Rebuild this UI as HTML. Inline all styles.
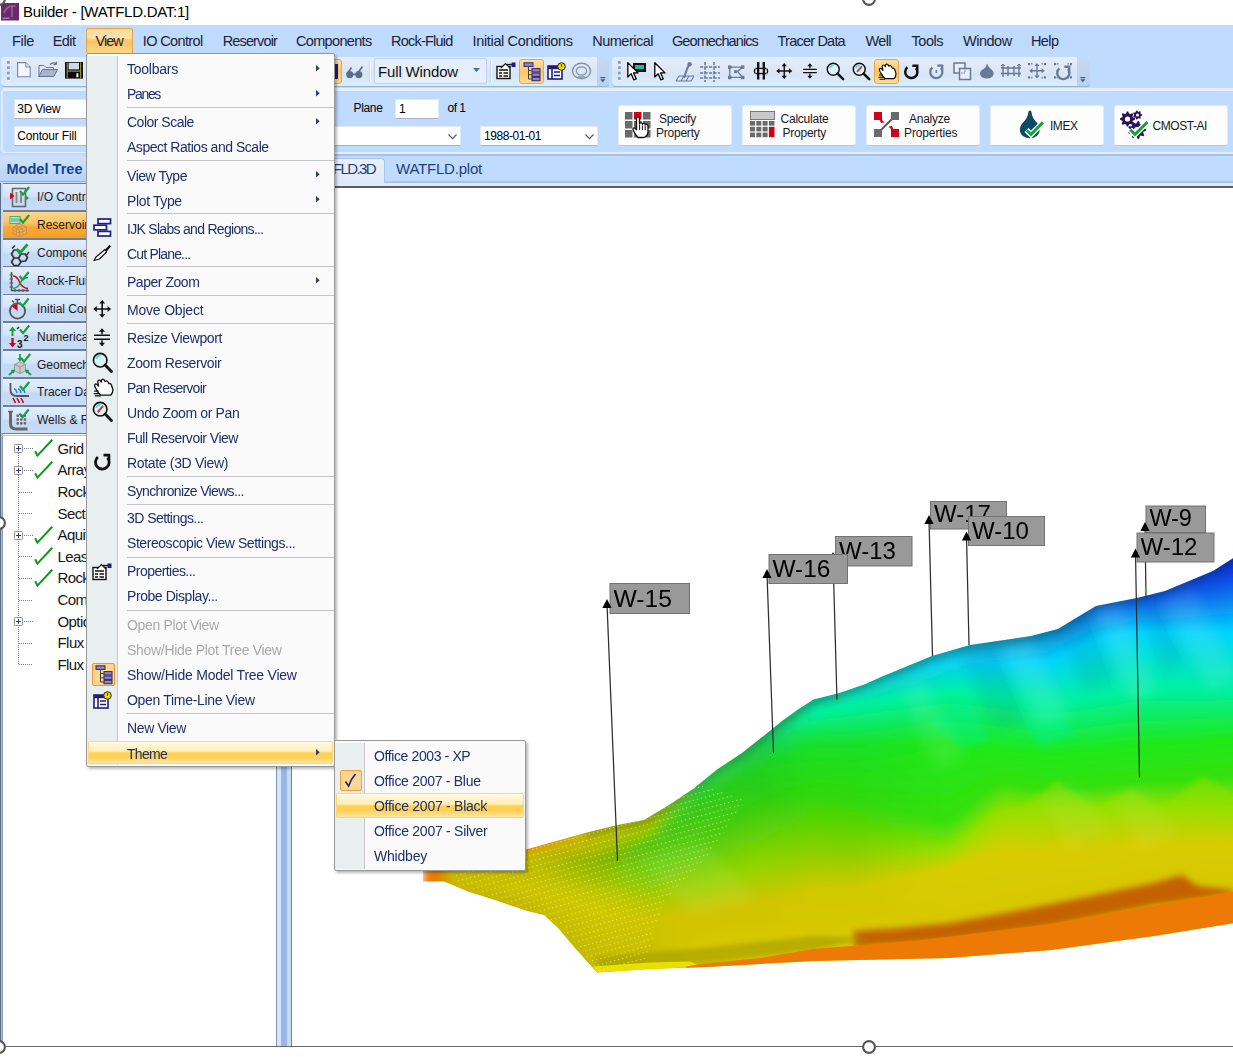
<!DOCTYPE html>
<html><head><meta charset="utf-8"><title>Builder</title>
<style>
html,body{margin:0;padding:0;}
body{width:1233px;height:1057px;position:relative;overflow:hidden;background:#fff;font-family:"Liberation Sans",sans-serif;}
.t{position:absolute;white-space:pre;line-height:20px;height:20px;font-family:"Liberation Sans",sans-serif;}
svg{overflow:visible}
</style></head><body>
<div style="position:absolute;left:0px;top:0px;width:1233px;height:25px;background:#fff;"></div>
<svg style="position:absolute;left:0.8px;top:3px;" width="18" height="17.5" viewBox="0 0 18 17.5"><rect x="0" y="0" width="18" height="17.5" fill="#6a2a6c"/><path d="M3 10 Q5.5 3.5 11 3.2 L14.5 3.2 M11 3.5 V14" fill="none" stroke="#8f5f93" stroke-width="1.8"/><rect x="1.5" y="14.6" width="7" height="1.2" fill="#b58fb8"/></svg>
<span class="t" style="left:23px;top:2.40px;font-size:15px;color:#000;font-weight:400;letter-spacing:-0.261px;">Builder - [WATFLD.DAT:1]</span>
<div style="position:absolute;left:0px;top:25px;width:1233px;height:162px;background:#bfdbff;"></div>
<div style="position:absolute;left:86px;top:28px;width:47px;height:25px;box-sizing:border-box;border:1px solid #e8a343;border-bottom:none;border-radius:3px 3px 0 0;background:linear-gradient(#fbd99a 0%,#fde3ae 35%,#fbc361 50%,#fcd689 100%);"></div>
<span class="t" style="left:12px;top:31.42px;font-size:14.5px;color:#1b2238;font-weight:400;letter-spacing:-0.344px;">File</span>
<span class="t" style="left:52.8px;top:31.42px;font-size:14.5px;color:#1b2238;font-weight:400;letter-spacing:-0.600px;">Edit</span>
<span class="t" style="left:95.5px;top:31.42px;font-size:14.5px;color:#1b2238;font-weight:400;letter-spacing:-0.993px;">View</span>
<span class="t" style="left:142.8px;top:31.42px;font-size:14.5px;color:#1b2238;font-weight:400;letter-spacing:-0.629px;">IO Control</span>
<span class="t" style="left:222.7px;top:31.42px;font-size:14.5px;color:#1b2238;font-weight:400;letter-spacing:-0.861px;">Reservoir</span>
<span class="t" style="left:296px;top:31.42px;font-size:14.5px;color:#1b2238;font-weight:400;letter-spacing:-0.672px;">Components</span>
<span class="t" style="left:391px;top:31.42px;font-size:14.5px;color:#1b2238;font-weight:400;letter-spacing:-0.780px;">Rock-Fluid</span>
<span class="t" style="left:472.6px;top:31.42px;font-size:14.5px;color:#1b2238;font-weight:400;letter-spacing:-0.356px;">Initial Conditions</span>
<span class="t" style="left:592.3px;top:31.42px;font-size:14.5px;color:#1b2238;font-weight:400;letter-spacing:-0.518px;">Numerical</span>
<span class="t" style="left:671.9px;top:31.42px;font-size:14.5px;color:#1b2238;font-weight:400;letter-spacing:-0.885px;">Geomechanics</span>
<span class="t" style="left:777.6px;top:31.42px;font-size:14.5px;color:#1b2238;font-weight:400;letter-spacing:-0.792px;">Tracer Data</span>
<span class="t" style="left:865.4px;top:31.42px;font-size:14.5px;color:#1b2238;font-weight:400;letter-spacing:-0.584px;">Well</span>
<span class="t" style="left:911.6px;top:31.42px;font-size:14.5px;color:#1b2238;font-weight:400;letter-spacing:-0.492px;">Tools</span>
<span class="t" style="left:963px;top:31.42px;font-size:14.5px;color:#1b2238;font-weight:400;letter-spacing:-0.480px;">Window</span>
<span class="t" style="left:1031px;top:31.42px;font-size:14.5px;color:#1b2238;font-weight:400;letter-spacing:-0.607px;">Help</span>
<div style="position:absolute;left:0.5px;top:56.5px;width:608.5px;height:30.5px;box-sizing:border-box;border-radius:4px;background:linear-gradient(#e6eefb 0%,#dde7f7 40%,#d8e5f6 60%,#d9eefb 100%);border-bottom:1px solid #94b4d6;"></div>
<div style="position:absolute;left:597px;top:56.5px;width:12px;height:30.5px;box-sizing:border-box;border-radius:0 4px 4px 0;background:linear-gradient(#c6d9f4,#bbd1ee);border-bottom:1px solid #94b4d6;"></div>
<div style="position:absolute;left:611.5px;top:56.5px;width:478px;height:30.5px;box-sizing:border-box;border-radius:4px;background:linear-gradient(#e6eefb 0%,#dde7f7 40%,#d8e5f6 60%,#d9eefb 100%);border-bottom:1px solid #94b4d6;"></div>
<div style="position:absolute;left:1077px;top:56.5px;width:12.5px;height:30.5px;box-sizing:border-box;border-radius:0 4px 4px 0;background:linear-gradient(#c6d9f4,#bbd1ee);border-bottom:1px solid #94b4d6;"></div>
<svg style="position:absolute;left:7.3px;top:61px;" width="5" height="21" viewBox="0 0 5 21"><rect x="1" y="1.00" width="2.6" height="2.6" fill="#f4f8fe"/><rect x="0" y="0.00" width="2.8" height="2.8" fill="#7b9fd6"/><rect x="1" y="6.35" width="2.6" height="2.6" fill="#f4f8fe"/><rect x="0" y="5.35" width="2.8" height="2.8" fill="#7b9fd6"/><rect x="1" y="11.70" width="2.6" height="2.6" fill="#f4f8fe"/><rect x="0" y="10.70" width="2.8" height="2.8" fill="#7b9fd6"/><rect x="1" y="17.05" width="2.6" height="2.6" fill="#f4f8fe"/><rect x="0" y="16.05" width="2.8" height="2.8" fill="#7b9fd6"/></svg>
<svg style="position:absolute;left:617.8px;top:61px;" width="5" height="21" viewBox="0 0 5 21"><rect x="1" y="1.00" width="2.6" height="2.6" fill="#f4f8fe"/><rect x="0" y="0.00" width="2.8" height="2.8" fill="#7b9fd6"/><rect x="1" y="6.35" width="2.6" height="2.6" fill="#f4f8fe"/><rect x="0" y="5.35" width="2.8" height="2.8" fill="#7b9fd6"/><rect x="1" y="11.70" width="2.6" height="2.6" fill="#f4f8fe"/><rect x="0" y="10.70" width="2.8" height="2.8" fill="#7b9fd6"/><rect x="1" y="17.05" width="2.6" height="2.6" fill="#f4f8fe"/><rect x="0" y="16.05" width="2.8" height="2.8" fill="#7b9fd6"/></svg>
<svg style="position:absolute;left:600.3px;top:76.6px;" width="6" height="6" viewBox="0 0 6 6"><rect x="0.3" y="0" width="5" height="1.2" fill="#3d5b8c"/><path d="M0.2 2.2 L5.4 2.2 L2.8 5.2 Z" fill="#3d5b8c"/></svg>
<svg style="position:absolute;left:1080px;top:76.6px;" width="6" height="6" viewBox="0 0 6 6"><rect x="0.3" y="0" width="5" height="1.2" fill="#3d5b8c"/><path d="M0.2 2.2 L5.4 2.2 L2.8 5.2 Z" fill="#3d5b8c"/></svg>
<svg style="position:absolute;left:17px;top:61.7px;" width="14" height="15.5" viewBox="0 0 14 15.5"><path d="M0.6 0.6 H8.8 L13.2 5 V14.8 H0.6 Z" fill="#f4f7fd" stroke="#7685a3" stroke-width="1.1"/><path d="M8.8 0.6 V5 H13.2" fill="#e2e9f6" stroke="#7685a3" stroke-width="1"/></svg>
<svg style="position:absolute;left:38px;top:61px;" width="21" height="17" viewBox="0 0 21 17"><path d="M1 4.5 H6 L8 6.5 H15.5 V8" fill="#eef2fa" stroke="#6c7a96"/><path d="M0.8 15.5 L4.5 8.5 H19.6 L15.8 15.5 Z" fill="#a9b3c9" stroke="#66738f"/><path d="M1 4.5 V15.5" stroke="#66738f"/><path d="M12 3.5 Q15 0.3 18.3 3 M18.6 3.4 l-3 .2 M18.6 3.4 l-.3 -2.8" fill="none" stroke="#66738f" stroke-width="1.2"/></svg>
<svg style="position:absolute;left:65px;top:62.2px;" width="18" height="16.6" viewBox="0 0 18 16.6"><rect x="0" y="0" width="18" height="16.6" fill="#0c0c0c"/><rect x="3.6" y="0.8" width="10.4" height="6.6" fill="#ccd6ec"/><path d="M2.2 0.5 V16 M15.6 0.5 V16 M2.2 9.2 H15.6" stroke="#8e8e24" stroke-width="1.2" fill="none"/><rect x="11.4" y="11.3" width="2" height="4" fill="#f2f2f2"/><rect x="15.2" y="3" width="1" height="2.4" fill="#8e8e24"/></svg>
<div style="position:absolute;left:328px;top:59px;width:14px;height:25px;box-sizing:border-box;border:1px solid #f0a44a;border-radius:3px;background:linear-gradient(#fde0a6,#fbc867 50%,#fdd98f);"></div>
<svg style="position:absolute;left:333px;top:64px;" width="6" height="15" viewBox="0 0 6 15"><rect x="0" y="0" width="5" height="15" fill="#1e1e78"/></svg>
<svg style="position:absolute;left:345px;top:65px;" width="22" height="14" viewBox="0 0 22 14"><path d="M2 9 L6.5 2.5 M12 9 L17.5 1.5" stroke="#5c6d8a" stroke-width="1.6" fill="none"/><circle cx="4.8" cy="9.6" r="3.6" fill="#5c6d8a"/><circle cx="13.8" cy="9.6" r="3.6" fill="#5c6d8a"/><rect x="8" y="8.6" width="3" height="1.6" fill="#5c6d8a"/></svg>
<div style="position:absolute;left:369px;top:61px;width:1px;height:21px;background:#c9d9f0;box-shadow:1px 0 0 #f3f7fd;"></div>
<div style="position:absolute;left:490px;top:61px;width:1px;height:21px;background:#c9d9f0;box-shadow:1px 0 0 #f3f7fd;"></div>
<div style="position:absolute;left:374px;top:58px;width:112.5px;height:26px;box-sizing:border-box;border:1px solid #c0d2ec;border-radius:2px;background:#e5eefb;"></div>
<span class="t" style="left:378px;top:61.90px;font-size:15px;color:#101010;font-weight:400;letter-spacing:-0.153px;">Full Window</span>
<svg style="position:absolute;left:473px;top:68px;" width="8" height="5" viewBox="0 0 8 5"><path d="M0 0 H7 L3.5 4 Z" fill="#4b6ba3"/></svg>
<svg style="position:absolute;left:496px;top:62px;" width="20" height="18" viewBox="0 0 20 18"><rect x="1" y="4.5" width="13" height="12" fill="#fff" stroke="#111" stroke-width="1.4"/><path d="M3 8 H12 M3 11 H6 M7.5 11 H12 M3 14 H6 M7.5 14 H12" stroke="#111" stroke-width="1.3"/><path d="M5 6 L9.5 1.5 L14 6" fill="#fff" stroke="#111" stroke-width="1.2"/><path d="M11 2.5 H16" stroke="#111" stroke-width="1.3"/><rect x="15.5" y="0.5" width="4" height="4.5" fill="#1a1a8a"/></svg>
<div style="position:absolute;left:519px;top:59px;width:25px;height:25px;box-sizing:border-box;border:1px solid #f0a44a;border-radius:3px;background:linear-gradient(#fde0a6,#fbc867 50%,#fdd98f);"></div>
<svg style="position:absolute;left:523px;top:61.5px;" width="18" height="20" viewBox="0 0 18 20"><rect x="1" y="0.8" width="9" height="3.6" fill="#8e86c9" stroke="#2b2470" stroke-width="1"/><path d="M5.5 4.5 V17 M5.5 8.5 H9 M5.5 12.8 H9 M5.5 17 H9" stroke="#444" stroke-width="1" fill="none"/><rect x="9" y="6.6" width="8" height="3.4" fill="#8e86c9" stroke="#2b2470"/><rect x="9" y="11" width="8" height="3.4" fill="#8e86c9" stroke="#2b2470"/><rect x="9" y="15.3" width="8" height="3.4" fill="#8e86c9" stroke="#2b2470"/></svg>
<svg style="position:absolute;left:547px;top:62px;" width="20" height="18" viewBox="0 0 20 18"><rect x="1" y="4" width="14" height="13" fill="#fff" stroke="#1e1e78" stroke-width="1.6"/><rect x="1" y="4" width="14" height="3.2" fill="#1e1e78"/><path d="M5 7 V17" stroke="#1e1e78" stroke-width="1.6"/><path d="M7 10 H13 M7 13.5 H13" stroke="#1e1e78" stroke-width="1.3"/><circle cx="14.5" cy="4.5" r="3.8" fill="#f4d800" stroke="#222" stroke-width="1"/><path d="M14.5 2.2 V4.8" stroke="#222" stroke-width="1"/></svg>
<svg style="position:absolute;left:571px;top:62px;" width="22" height="18" viewBox="0 0 22 18"><ellipse cx="10.5" cy="9" rx="9" ry="7.8" fill="none" stroke="#8593ad" stroke-width="1.5"/><ellipse cx="10.5" cy="9" rx="5.2" ry="4.2" fill="none" stroke="#8593ad" stroke-width="1.2"/><path d="M7 15 H14" stroke="#8593ad" stroke-width="1.5"/></svg>
<svg style="position:absolute;left:633px;top:63px;" width="13" height="9" viewBox="0 0 13 9"><rect x="0" y="0" width="13" height="9" fill="#111"/><rect x="2" y="2" width="9" height="4" fill="#27b5a8"/></svg>
<svg style="position:absolute;left:627px;top:62px;" width="12" height="19" viewBox="0 0 12 19"><path d="M0.8 0.8 V15 L4.2 11.8 L6.8 17.8 L9.2 16.8 L6.6 10.9 L11 10.9 Z" fill="#fff" stroke="#000" stroke-width="1.3" stroke-linejoin="round"/></svg>
<svg style="position:absolute;left:654px;top:62px;" width="12" height="19" viewBox="0 0 12 19"><path d="M0.8 0.8 V15 L4.2 11.8 L6.8 17.8 L9.2 16.8 L6.6 10.9 L11 10.9 Z" fill="#fff" stroke="#000" stroke-width="1.3" stroke-linejoin="round"/></svg>
<svg style="position:absolute;left:675px;top:61px;" width="22" height="21" viewBox="0 0 22 21"><path d="M4 15 H19 M1 20 H16 M4 15 L1 20 M9 15 L6 20 M14 15 L11 20 M19 15 L16 20" stroke="#6a7994" stroke-width="1.1" fill="none"/><path d="M9 17 L12 8 L14 4" stroke="#6a7994" stroke-width="2" fill="none"/><circle cx="14.6" cy="3.2" r="2.2" fill="#6a7994"/></svg>
<svg style="position:absolute;left:700px;top:62px;" width="20" height="20" viewBox="0 0 20 20"><path d="M5 0 V20 M14 0 V20 M0 5 H20 M0 11 H20 M0 16 H20" stroke="#6a7994" stroke-width="1.6" stroke-dasharray="3.2 1.3" fill="none"/></svg>
<svg style="position:absolute;left:727.8px;top:64.5px;" width="16.4" height="14.6" viewBox="0 0 19 16"><path d="M2 2 H17 L11 7 L17 14 H2 Z" fill="none" stroke="#6a7994" stroke-width="1.5"/><rect x="0" y="0" width="4" height="4" fill="#6a7994"/><rect x="15" y="0" width="4" height="4" fill="#6a7994"/><rect x="0" y="12" width="4" height="4" fill="#6a7994"/><rect x="15" y="12" width="4" height="4" fill="#6a7994"/><rect x="7" y="5.5" width="3.4" height="3.4" fill="#6a7994"/></svg>
<svg style="position:absolute;left:754px;top:62px;" width="14" height="17.5" viewBox="0 0 14 17.5"><path d="M4.2 0 V17.5 M9.8 0 V17.5" stroke="#111" stroke-width="2.4"/><path d="M1.5 6.5 H12.5 M1.5 11.5 H12.5" stroke="#111" stroke-width="1.4"/><path d="M1.2 7 Q-0.4 9 1.2 11.5 M12.8 7 Q14.4 9 12.8 11.5" stroke="#111" stroke-width="1.3" fill="none"/><path d="M5.4 8 H8.6 M5.4 10 H8.6 M5.4 14 H8.6" stroke="#eee" stroke-width="0.9"/></svg>
<svg style="position:absolute;left:776.2px;top:63.2px;" width="16.5" height="16.005" viewBox="0 0 18 18"><path d="M9 1.5 V16.5 M1.5 9 H16.5" stroke="#111" stroke-width="1.6"/><path d="M9 0 L12 3.6 H6 Z M9 18 L12 14.4 H6 Z M0 9 L3.6 6 V12 Z M18 9 L14.4 6 V12 Z" fill="#111"/></svg>
<svg style="position:absolute;left:803px;top:63.2px;" width="13.8" height="16.008" viewBox="0 0 16 18"><path d="M0 7 H16 M0 11 H16" stroke="#111" stroke-width="1.5"/><path d="M8 1 V6 M8 12 V17" stroke="#111" stroke-width="1.5"/><path d="M8 0 L11 3.4 H5 Z M8 18 L11 14.6 H5 Z" fill="#111"/></svg>
<svg style="position:absolute;left:826px;top:61.7px;" width="19" height="19" viewBox="0 0 21 21"><circle cx="8" cy="8" r="6.6" fill="#d8f6fb" stroke="#111" stroke-width="1.6"/><path d="M4.2 6.5 Q5.5 3.6 8.5 3.6" stroke="#4fd0e6" stroke-width="1.6" fill="none"/><path d="M12.8 12.8 L19 19" stroke="#111" stroke-width="2.8" stroke-linecap="round"/></svg>
<svg style="position:absolute;left:851.5px;top:61.7px;" width="19" height="19" viewBox="0 0 21 21"><circle cx="8" cy="8" r="6.6" fill="#d8f6fb" stroke="#111" stroke-width="1.6"/><path d="M4.2 6.5 Q5.5 3.6 8.5 3.6" stroke="#4fd0e6" stroke-width="1.6" fill="none"/><path d="M12.8 12.8 L19 19" stroke="#111" stroke-width="2.8" stroke-linecap="round"/><path d="M5.5 11 L10.8 4.8" stroke="#e03030" stroke-width="2"/></svg>
<div style="position:absolute;left:874px;top:59px;width:25px;height:25px;box-sizing:border-box;border:1px solid #f0a44a;border-radius:3px;background:linear-gradient(#fde0a6,#fbc867 50%,#fdd98f);"></div>
<svg style="position:absolute;left:877px;top:63px;" width="20" height="17" viewBox="0 0 20 17"><path d="M3.5 9.5 Q1.5 6.5 3 5.5 Q4.6 5 6 7.4 L5.2 3.6 Q5.2 2 6.6 2 Q7.8 2 8.4 3.8 L8.6 2 Q9.4 0.6 10.8 1.4 L11.8 3.2 Q13 2 14.2 3.2 L15.4 5.2 Q16.8 4.6 17.6 6.2 L19 10.5 Q19.2 13.5 17 15.6 H8 Q4.8 13 3.5 9.5 Z" fill="#fff" stroke="#111" stroke-width="1.2" stroke-linejoin="round"/><path d="M2 12 H6 M1.5 14.2 H7 M2.5 16.2 H8" stroke="#111" stroke-width="1.1"/></svg>
<svg style="position:absolute;left:903px;top:62px;" width="18" height="18" viewBox="0 0 18 18"><path d="M4.38 5.33 A6.1 6.1 0 1 0 12.97 6.08" fill="none" stroke="#111" stroke-width="2.5"/><path d="M9.4 3.7 H14.2 V8" fill="none" stroke="#111" stroke-width="2.5"/></svg>
<svg style="position:absolute;left:927.5px;top:62px;" width="18" height="18" viewBox="0 0 18 18"><path d="M4.38 5.33 A6.1 6.1 0 1 0 12.97 6.08" fill="none" stroke="#6a7994" stroke-width="2.2"/><path d="M9.4 3.7 H14.2 V8" fill="none" stroke="#6a7994" stroke-width="2.2"/><path d="M8.3 8 V11" stroke="#6a7994" stroke-width="1.5"/></svg>
<svg style="position:absolute;left:953px;top:62px;" width="19" height="19" viewBox="0 0 19 19"><rect x="1" y="1" width="11" height="10" fill="#e6eefb" stroke="#6a7994" stroke-width="1.5"/><rect x="6.5" y="6.5" width="11" height="11" fill="#e6eefb" stroke="#6a7994" stroke-width="1.5"/><rect x="6.5" y="6.5" width="5.5" height="4.5" fill="none" stroke="#6a7994" stroke-width="1" stroke-dasharray="1.5 1"/></svg>
<svg style="position:absolute;left:979px;top:63px;" width="16" height="16" viewBox="0 0 16 16"><path d="M8 0.5 Q9 4 13 7 Q16 10 13.5 13.5 Q11 16 7.5 15.5 Q2.5 15.5 1 11.5 Q0.5 8 4.5 6 Q7.5 4 8 0.5 Z" fill="#6a7994"/></svg>
<svg style="position:absolute;left:1000px;top:64px;" width="22" height="14" viewBox="0 0 22 14"><path d="M3 1 V13 M8 2 V12 M14 2 V12 M19 1 V13" stroke="#6a7994" stroke-width="1.4"/><path d="M1 4 H21 M1 9.5 H21" stroke="#6a7994" stroke-width="1.4"/><path d="M1 2 l2 -2 l2 2 M17 2 l2 -2 l2 2" stroke="#6a7994" stroke-width="1" fill="none"/></svg>
<svg style="position:absolute;left:1029.3px;top:63.2px;" width="16" height="15.52" viewBox="0 0 18 18"><path d="M9 1.5 V16.5 M1.5 9 H16.5" stroke="#6a7994" stroke-width="1.6"/><path d="M9 0 L12 3.6 H6 Z M9 18 L12 14.4 H6 Z M0 9 L3.6 6 V12 Z M18 9 L14.4 6 V12 Z" fill="#6a7994"/></svg>
<svg style="position:absolute;left:1028.3px;top:63.3px;" width="18" height="15.5" viewBox="0 0 18 15.5"><rect x="0" y="0" width="2.2" height="2.2" fill="#6a7994"/><rect x="0" y="13.3" width="2.2" height="2.2" fill="#6a7994"/><rect x="15.8" y="0" width="2.2" height="2.2" fill="#6a7994"/><rect x="15.8" y="13.3" width="2.2" height="2.2" fill="#6a7994"/><rect x="3" y="0" width="1.6" height="1.6" fill="#6a7994" opacity=".7"/><rect x="13.4" y="0" width="1.6" height="1.6" fill="#6a7994" opacity=".7"/><rect x="3" y="13.9" width="1.6" height="1.6" fill="#6a7994" opacity=".7"/><rect x="13.4" y="13.9" width="1.6" height="1.6" fill="#6a7994" opacity=".7"/></svg>
<svg style="position:absolute;left:1054.5px;top:62.5px;" width="18" height="18" viewBox="0 0 18 18"><path d="M4.38 5.33 A6.1 6.1 0 1 0 12.97 6.08" fill="none" stroke="#6a7994" stroke-width="2.4"/><path d="M9.4 3.7 H14.2 V8" fill="none" stroke="#6a7994" stroke-width="2.4"/></svg>
<svg style="position:absolute;left:1054px;top:63.3px;" width="18" height="15.5" viewBox="0 0 18 15.5"><rect x="0" y="0" width="2.2" height="2.2" fill="#6a7994"/><rect x="0" y="13.3" width="2.2" height="2.2" fill="#6a7994"/><rect x="15.8" y="0" width="2.2" height="2.2" fill="#6a7994"/><rect x="15.8" y="13.3" width="2.2" height="2.2" fill="#6a7994"/><rect x="3" y="0" width="1.6" height="1.6" fill="#6a7994" opacity=".7"/><rect x="13.4" y="0" width="1.6" height="1.6" fill="#6a7994" opacity=".7"/><rect x="3" y="13.9" width="1.6" height="1.6" fill="#6a7994" opacity=".7"/><rect x="13.4" y="13.9" width="1.6" height="1.6" fill="#6a7994" opacity=".7"/></svg>
<div style="position:absolute;left:0.5px;top:88px;width:1240px;height:66.3px;box-sizing:border-box;border:2.5px solid #e1ecfb;border-radius:5px;background:#bfdbff;"></div>
<div style="position:absolute;left:3px;top:151.7px;width:1230px;height:2.6px;background:#e4eefc;"></div>
<div style="position:absolute;left:0px;top:154.3px;width:1233px;height:1.7px;background:#a6c2e4;"></div>
<div style="position:absolute;left:3px;top:88px;width:1230px;height:2.6px;background:#e4eefc;"></div>
<div style="position:absolute;left:14px;top:99px;width:200px;height:20px;box-sizing:border-box;background:#fff;border:1px solid #e3e9f2;border-bottom-color:#aab2bf;border-radius:1px;"></div>
<svg style="position:absolute;left:201px;top:106.8px;" width="9" height="6" viewBox="0 0 9 6"><path d="M0.5 0.5 L4.5 4.6 L8.5 0.5" fill="none" stroke="#555" stroke-width="1.1"/></svg>
<div style="position:absolute;left:14px;top:126px;width:200px;height:20px;box-sizing:border-box;background:#fff;border:1px solid #e3e9f2;border-bottom-color:#aab2bf;border-radius:1px;"></div>
<svg style="position:absolute;left:201px;top:133.8px;" width="9" height="6" viewBox="0 0 9 6"><path d="M0.5 0.5 L4.5 4.6 L8.5 0.5" fill="none" stroke="#555" stroke-width="1.1"/></svg>
<span class="t" style="left:17.2px;top:99.02px;font-size:12px;color:#000;font-weight:400;letter-spacing:-0.210px;">3D View</span>
<span class="t" style="left:17.2px;top:126.02px;font-size:12px;color:#000;font-weight:400;letter-spacing:-0.172px;">Contour Fill</span>
<div style="position:absolute;left:200px;top:126px;width:261px;height:20px;box-sizing:border-box;background:#fff;border:1px solid #e3e9f2;border-bottom-color:#aab2bf;border-radius:1px;"></div>
<svg style="position:absolute;left:448px;top:133.8px;" width="9" height="6" viewBox="0 0 9 6"><path d="M0.5 0.5 L4.5 4.6 L8.5 0.5" fill="none" stroke="#555" stroke-width="1.1"/></svg>
<span class="t" style="left:353.5px;top:98.02px;font-size:12px;color:#000;font-weight:400;letter-spacing:-0.341px;">Plane</span>
<div style="position:absolute;left:395px;top:99px;width:44px;height:20px;box-sizing:border-box;background:#fff;border:1px solid #e3e9f2;border-bottom-color:#aab2bf;border-radius:1px;"></div>
<span class="t" style="left:399px;top:99.02px;font-size:12px;color:#000;font-weight:400;letter-spacing:0.000px;">1</span>
<span class="t" style="left:447.5px;top:98.02px;font-size:12px;color:#000;font-weight:400;letter-spacing:-0.504px;">of 1</span>
<div style="position:absolute;left:480px;top:126px;width:118px;height:20px;box-sizing:border-box;background:#fff;border:1px solid #e3e9f2;border-bottom-color:#aab2bf;border-radius:1px;"></div>
<svg style="position:absolute;left:585px;top:133.8px;" width="9" height="6" viewBox="0 0 9 6"><path d="M0.5 0.5 L4.5 4.6 L8.5 0.5" fill="none" stroke="#555" stroke-width="1.1"/></svg>
<span class="t" style="left:484px;top:126.02px;font-size:12px;color:#000;font-weight:400;letter-spacing:-0.439px;">1988-01-01</span>
<div style="position:absolute;left:618px;top:105px;width:114px;height:40.5px;box-sizing:border-box;background:#fdfdfe;border:1px solid #e4ebf5;border-bottom-color:#bcc5d2;border-radius:3px;"></div>
<div style="position:absolute;left:742px;top:105px;width:114px;height:40.5px;box-sizing:border-box;background:#fdfdfe;border:1px solid #e4ebf5;border-bottom-color:#bcc5d2;border-radius:3px;"></div>
<div style="position:absolute;left:866px;top:105px;width:114px;height:40.5px;box-sizing:border-box;background:#fdfdfe;border:1px solid #e4ebf5;border-bottom-color:#bcc5d2;border-radius:3px;"></div>
<div style="position:absolute;left:990px;top:105px;width:114px;height:40.5px;box-sizing:border-box;background:#fdfdfe;border:1px solid #e4ebf5;border-bottom-color:#bcc5d2;border-radius:3px;"></div>
<div style="position:absolute;left:1114px;top:105px;width:114px;height:40.5px;box-sizing:border-box;background:#fdfdfe;border:1px solid #e4ebf5;border-bottom-color:#bcc5d2;border-radius:3px;"></div>
<svg style="position:absolute;left:625px;top:112px;" width="26" height="26" viewBox="0 0 26 26"><rect x="0" y="0" width="7.5" height="7.5" fill="#6a6a6a"/><rect x="9" y="0" width="7.5" height="7.5" fill="#d0021b"/><rect x="18" y="0" width="7.5" height="7.5" fill="#6a6a6a"/><rect x="0" y="9" width="7.5" height="7.5" fill="#6a6a6a"/><rect x="9" y="9" width="7.5" height="7.5" fill="#6a6a6a"/><rect x="18" y="9" width="7.5" height="7.5" fill="#6a6a6a"/><rect x="0" y="18" width="7.5" height="7.5" fill="#6a6a6a"/><rect x="9" y="18" width="7.5" height="7.5" fill="#6a6a6a"/><rect x="18" y="18" width="7.5" height="7.5" fill="#6a6a6a"/><path d="M11.5 17 V6.5 Q11.5 4.8 13 4.8 Q14.5 4.8 14.5 6.5 V12 Q14.6 10.6 16 10.6 Q17.4 10.7 17.4 12.4 Q17.6 11.2 18.9 11.3 Q20.2 11.5 20.2 13 Q20.6 12 21.8 12.3 Q23 12.7 23 14.2 V19.5 Q23 24 19 25.5 H13 Q10.5 23 8.6 19 Q7.4 16.6 8.6 16 Q10 15.5 11.5 17.8 Z" fill="#fff" stroke="#111" stroke-width="1.3" stroke-linejoin="round"/><path d="M14.6 13 V18 M17.4 13.5 V18 M20.2 14 V18" stroke="#111" stroke-width="1"/></svg>
<span class="t" style="left:659px;top:109.02px;font-size:12px;color:#1a1a1a;font-weight:400;letter-spacing:-0.337px;">Specify</span>
<span class="t" style="left:656px;top:123.02px;font-size:12px;color:#1a1a1a;font-weight:400;letter-spacing:-0.232px;">Property</span>
<svg style="position:absolute;left:750px;top:111px;" width="25" height="27" viewBox="0 0 25 27"><rect x="0.5" y="0.5" width="24" height="8" fill="#c9c9c9" stroke="#7a7a7a"/><rect x="0.0" y="10.0" width="5" height="4.6" fill="#6a6a6a"/><rect x="6.3" y="10.0" width="5" height="4.6" fill="#6a6a6a"/><rect x="12.6" y="10.0" width="5" height="4.6" fill="#6a6a6a"/><rect x="0.0" y="15.8" width="5" height="4.6" fill="#6a6a6a"/><rect x="6.3" y="15.8" width="5" height="4.6" fill="#6a6a6a"/><rect x="12.6" y="15.8" width="5" height="4.6" fill="#6a6a6a"/><rect x="0.0" y="21.6" width="5" height="4.6" fill="#6a6a6a"/><rect x="6.3" y="21.6" width="5" height="4.6" fill="#6a6a6a"/><rect x="12.6" y="21.6" width="5" height="4.6" fill="#6a6a6a"/><rect x="18.9" y="10" width="5.6" height="4.6" fill="#6a6a6a"/><rect x="18.9" y="15.8" width="5.6" height="10.4" fill="#d0021b"/></svg>
<span class="t" style="left:780.5px;top:109.02px;font-size:12px;color:#1a1a1a;font-weight:400;letter-spacing:-0.226px;">Calculate</span>
<span class="t" style="left:782.5px;top:123.02px;font-size:12px;color:#1a1a1a;font-weight:400;letter-spacing:-0.232px;">Property</span>
<svg style="position:absolute;left:874px;top:112px;" width="25" height="25" viewBox="0 0 25 25"><path d="M20 5 L5 20" stroke="#555" stroke-width="1.8"/><rect x="0" y="0" width="8" height="8" fill="#d0021b"/><path d="M4 4 L10.5 10.5 L7 11 Z" fill="#d0021b"/><rect x="17" y="0" width="8" height="8" fill="#6a6a6a"/><rect x="0" y="17" width="8" height="8" fill="#6a6a6a"/><rect x="17" y="17" width="8" height="8" fill="#d0021b"/><path d="M21 21 L14.5 14.5 L18 14 Z" fill="#d0021b"/></svg>
<span class="t" style="left:909px;top:109.02px;font-size:12px;color:#1a1a1a;font-weight:400;letter-spacing:-0.243px;">Analyze</span>
<span class="t" style="left:904px;top:123.02px;font-size:12px;color:#1a1a1a;font-weight:400;letter-spacing:-0.120px;">Properties</span>
<svg style="position:absolute;left:1019px;top:110px;" width="26" height="29" viewBox="0 0 26 29"><path d="M11 0.5 Q12.5 0.5 12.5 2.5 Q13 8 18.5 13.5 Q21.5 17 20.5 21.5 Q19 28 11 28.3 Q2.5 28 1 21.5 Q0 17 4 12.5 Q9 7.5 9.3 2.5 Q9.5 0.5 11 0.5 Z" fill="#0c4a66"/><path d="M7.5 20 L12 24.5 L24.5 12" fill="none" stroke="#fff" stroke-width="5.5"/><path d="M7.8 20.2 L12 24.4 L24 12.4" fill="none" stroke="#1aa23a" stroke-width="3"/></svg>
<span class="t" style="left:1050px;top:115.52px;font-size:12px;color:#1a1a1a;font-weight:400;letter-spacing:-0.461px;">IMEX</span>
<svg style="position:absolute;left:1120px;top:110px;" width="30" height="30" viewBox="0 0 30 30"><polygon points="14.97,8.34 14.97,9.66 12.79,10.66 12.42,11.57 13.25,13.81 12.31,14.75 10.07,13.92 9.16,14.29 8.16,16.47 6.84,16.47 5.84,14.29 4.93,13.92 2.69,14.75 1.75,13.81 2.58,11.57 2.21,10.66 0.03,9.66 0.03,8.34 2.21,7.34 2.58,6.43 1.75,4.19 2.69,3.25 4.93,4.08 5.84,3.71 6.84,1.53 8.16,1.53 9.16,3.71 10.07,4.08 12.31,3.25 13.25,4.19 12.42,6.43 12.79,7.34" fill="#2a1458"/><circle cx="7.5" cy="9" r="2.6" fill="#fdfdfe"/><polygon points="22.08,4.54 22.08,5.46 20.70,6.16 20.40,6.78 20.72,8.29 19.99,8.87 18.59,8.23 17.92,8.38 16.93,9.57 16.03,9.36 15.66,7.86 15.12,7.43 13.58,7.40 13.18,6.57 14.11,5.34 14.11,4.66 13.18,3.43 13.58,2.60 15.12,2.57 15.66,2.14 16.03,0.64 16.93,0.43 17.92,1.62 18.59,1.77 19.99,1.13 20.72,1.71 20.40,3.22 20.70,3.84" fill="#2a1458"/><circle cx="17.5" cy="5" r="1.5" fill="#fdfdfe"/><polygon points="25.97,19.29 25.97,20.71 23.42,21.78 23.06,22.76 24.33,25.23 23.42,26.31 20.77,25.49 19.87,26.01 19.25,28.71 17.86,28.96 16.36,26.63 15.33,26.45 13.13,28.12 11.90,27.42 12.25,24.67 11.58,23.87 8.81,23.73 8.33,22.41 10.36,20.52 10.36,19.48 8.33,17.59 8.81,16.27 11.58,16.13 12.25,15.33 11.90,12.58 13.13,11.88 15.33,13.55 16.36,13.37 17.86,11.04 19.25,11.29 19.87,13.99 20.77,14.51 23.42,13.69 24.33,14.77 23.06,17.24 23.42,18.22" fill="#2a1458"/><circle cx="17" cy="20" r="3" fill="#fdfdfe"/><path d="M10 19.5 L15 24.5 L28 11.5" fill="none" stroke="#fff" stroke-width="5.5"/><path d="M10.3 19.7 L15 24.4 L27.5 12" fill="none" stroke="#1aa23a" stroke-width="3"/></svg>
<span class="t" style="left:1152.5px;top:115.52px;font-size:12px;color:#1a1a1a;font-weight:400;letter-spacing:-0.439px;">CMOST-AI</span>
<div style="position:absolute;left:0px;top:156px;width:1233px;height:26px;background:#bfdbff;"></div>
<div style="position:absolute;left:0px;top:181px;width:1233px;height:1.8px;background:#a8c4ea;"></div>
<div style="position:absolute;left:0px;top:182.8px;width:1233px;height:3.4px;background:#dfe9f8;"></div>
<div style="position:absolute;left:292px;top:186px;width:941px;height:1.8px;background:#5c5c5c;"></div>
<div style="position:absolute;left:300px;top:158px;width:84.5px;height:25px;box-sizing:border-box;border:1px solid #a9c4ea;border-bottom:none;border-radius:4px 4px 0 0;background:linear-gradient(#e9f0fb,#dfe9f8);"></div>
<span class="t" style="left:306px;top:159.40px;font-size:15px;color:#1d3f7f;font-weight:400;letter-spacing:-1.594px;">WATFLD.3D</span>
<span class="t" style="left:396px;top:159.40px;font-size:15px;color:#1d3f7f;font-weight:400;letter-spacing:-0.214px;">WATFLD.plot</span>
<div style="position:absolute;left:0px;top:153px;width:276px;height:894px;background:#bfdbff;"></div>
<div style="position:absolute;left:0px;top:156px;width:276px;height:26px;background:linear-gradient(#cfe2fb 0%,#c3dbfa 50%,#b9d3f6 100%);border-bottom:1px solid #8fb0e0;box-sizing:border-box;"></div>
<span class="t" style="left:6.5px;top:158.92px;font-size:14.5px;color:#15428b;font-weight:700;letter-spacing:0.025px;">Model Tree</span>
<div style="position:absolute;left:2.6px;top:183px;width:273.4px;height:252px;background:#6d7f9c;"></div>
<div style="position:absolute;left:0px;top:183px;width:0.9px;height:864px;background:#5a6a80;"></div>
<div style="position:absolute;left:2.6px;top:183.80px;width:273.4px;height:26.25px;background:linear-gradient(#e3eefc 0%,#d3e4fa 45%,#c3d9f6 55%,#c7dcf8 100%);"></div>
<span class="t" style="left:37px;top:187.45px;font-size:12px;color:#1b1b1b;font-weight:400;letter-spacing:0.000px;">I/O Control</span>
<div style="position:absolute;left:2.6px;top:211.65px;width:273.4px;height:26.25px;background:linear-gradient(#fbd78d 0%,#fbc566 40%,#f8a936 60%,#f79f1f 100%);"></div>
<span class="t" style="left:37px;top:215.30px;font-size:12px;color:#1b1b1b;font-weight:400;letter-spacing:0.000px;">Reservoir</span>
<div style="position:absolute;left:2.6px;top:239.50px;width:273.4px;height:26.25px;background:linear-gradient(#e3eefc 0%,#d3e4fa 45%,#c3d9f6 55%,#c7dcf8 100%);"></div>
<span class="t" style="left:37px;top:243.15px;font-size:12px;color:#1b1b1b;font-weight:400;letter-spacing:0.000px;">Components</span>
<div style="position:absolute;left:2.6px;top:267.35px;width:273.4px;height:26.25px;background:linear-gradient(#e3eefc 0%,#d3e4fa 45%,#c3d9f6 55%,#c7dcf8 100%);"></div>
<span class="t" style="left:37px;top:271.00px;font-size:12px;color:#1b1b1b;font-weight:400;letter-spacing:0.000px;">Rock-Fluid</span>
<div style="position:absolute;left:2.6px;top:295.20px;width:273.4px;height:26.25px;background:linear-gradient(#e3eefc 0%,#d3e4fa 45%,#c3d9f6 55%,#c7dcf8 100%);"></div>
<span class="t" style="left:37px;top:298.85px;font-size:12px;color:#1b1b1b;font-weight:400;letter-spacing:0.000px;">Initial Conditions</span>
<div style="position:absolute;left:2.6px;top:323.05px;width:273.4px;height:26.25px;background:linear-gradient(#e3eefc 0%,#d3e4fa 45%,#c3d9f6 55%,#c7dcf8 100%);"></div>
<span class="t" style="left:37px;top:326.69px;font-size:12px;color:#1b1b1b;font-weight:400;letter-spacing:0.000px;">Numerical</span>
<div style="position:absolute;left:2.6px;top:350.90px;width:273.4px;height:26.25px;background:linear-gradient(#e3eefc 0%,#d3e4fa 45%,#c3d9f6 55%,#c7dcf8 100%);"></div>
<span class="t" style="left:37px;top:354.55px;font-size:12px;color:#1b1b1b;font-weight:400;letter-spacing:0.000px;">Geomechanics</span>
<div style="position:absolute;left:2.6px;top:378.75px;width:273.4px;height:26.25px;background:linear-gradient(#e3eefc 0%,#d3e4fa 45%,#c3d9f6 55%,#c7dcf8 100%);"></div>
<span class="t" style="left:37px;top:382.39px;font-size:12px;color:#1b1b1b;font-weight:400;letter-spacing:0.000px;">Tracer Data</span>
<div style="position:absolute;left:2.6px;top:406.60px;width:273.4px;height:26.25px;background:linear-gradient(#e3eefc 0%,#d3e4fa 45%,#c3d9f6 55%,#c7dcf8 100%);"></div>
<span class="t" style="left:37px;top:410.25px;font-size:12px;color:#1b1b1b;font-weight:400;letter-spacing:0.000px;">Wells &amp; Recurrent</span>
<svg style="position:absolute;left:6.5px;top:186.00px;" width="24" height="24" viewBox="0 0 24 24"><rect x="5.5" y="2.5" width="13" height="18" fill="none" stroke="#6a6a6a" stroke-width="1.6"/><path d="M9.5 6 V17 M14 6 V17" stroke="#8a8a8a" stroke-width="2"/><path d="M3 6.5 L7.5 10 L3 13.5 Z" fill="#d0021b"/><path d="M18 9 L22 12 L18 15 Z" fill="#18a03c"/><path d="M13 5 l3 3.6 l6.2 -7.6" fill="none" stroke="#18a03c" stroke-width="2.2"/></svg>
<svg style="position:absolute;left:6.5px;top:213.85px;" width="24" height="24" viewBox="0 0 24 24"><rect x="3" y="2.5" width="10" height="7" fill="#bfe6d0" stroke="#3fae7a" stroke-width="1"/><path d="M4 5 H12 M4 7 H12" stroke="#3fae7a" stroke-width="1"/><path d="M6 13 L12.5 10 L19.5 13 V19.5 L12.5 22.5 L6 19.5 Z M6 13 L12.5 16 L19.5 13 M12.5 16 V22.5 M9 11.5 L15.8 14.6 V21 M16 11.5 L9.2 14.6 V21 M6 16.2 L12.5 19.2 L19.5 16.2" fill="#e9b77a" fill-opacity=".5" stroke="#c98e4e" stroke-width="0.9"/><path d="M13 5 l3 3.6 l6.2 -7.6" fill="none" stroke="#18a03c" stroke-width="2.2"/></svg>
<svg style="position:absolute;left:6.5px;top:241.70px;" width="24" height="24" viewBox="0 0 24 24"><path d="M4.5 12 L7 8 H11.5 L14 12 L11.5 16 H7 Z M7 16 L4.5 20 L7 23.5 H11.5 L14 20 L11.5 16 M14 12 L18 12 L20.5 15.5 L18.5 19 L14 19.5" fill="none" stroke="#333" stroke-width="1.7" stroke-linejoin="round"/><path d="M5 6.5 L8 3.5 M19.5 13 L22 10" stroke="#333" stroke-width="1.6"/><path d="M9.5 7 l3.4 4 l7.6 -8.6" fill="none" stroke="#18a03c" stroke-width="2.8"/></svg>
<svg style="position:absolute;left:6.5px;top:269.55px;" width="24" height="24" viewBox="0 0 24 24"><path d="M4.5 2 V20.5 H22" fill="none" stroke="#555" stroke-width="1.5"/><path d="M2.5 5 H6 M2.5 9 H6 M2.5 13 H6 M2.5 17 H6 M8 19 V22 M12 19 V22 M16 19 V22 M20 19 V22" stroke="#555" stroke-width="1"/><path d="M6 6 Q10 6 12.5 12 Q15 18 21 18.5" fill="none" stroke="#d0021b" stroke-width="1.5"/><path d="M6 18.5 Q11 18 13.5 12.5 Q16 8 21 7.5" fill="none" stroke="#18a03c" stroke-width="1.5"/><path d="M12.5 6 l3 3.6 l6.2 -7.6" fill="none" stroke="#18a03c" stroke-width="2.2"/></svg>
<svg style="position:absolute;left:6.5px;top:297.40px;" width="24" height="24" viewBox="0 0 24 24"><circle cx="10.5" cy="14" r="7.6" fill="none" stroke="#555" stroke-width="1.8"/><path d="M7 5.5 L5 3.5 M10.5 6 V2.5 M8 2.5 H13" stroke="#555" stroke-width="1.6"/><path d="M10.5 14 L5 9.5 A7 7 0 0 1 10.5 7 Z" fill="#d0021b"/><path d="M12.5 5.5 l3 3.6 l6.2 -7.6" fill="none" stroke="#18a03c" stroke-width="2.2"/></svg>
<svg style="position:absolute;left:6.5px;top:325.25px;" width="24" height="24" viewBox="0 0 24 24"><path d="M5.5 4 V11 M5.5 13 V20" stroke="#18a03c" stroke-width="2"/><path d="M5.5 1.5 L9 6 H2 Z" fill="#18a03c"/><path d="M5.5 13 V19" stroke="#d0021b" stroke-width="2"/><path d="M5.5 22.5 L9 18 H2 Z" fill="#d0021b"/><text x="10" y="23" font-family="Liberation Sans" font-weight="700" font-size="10" fill="#111">3</text><text x="16.5" y="15.5" font-family="Liberation Sans" font-weight="700" font-size="9" fill="#111">2</text><path d="M10 4 l2 -2" stroke="#111" stroke-width="1.4"/><path d="M13 4.5 l3 3.6 l6.2 -7.6" fill="none" stroke="#18a03c" stroke-width="2.2"/></svg>
<svg style="position:absolute;left:6.5px;top:353.10px;" width="24" height="24" viewBox="0 0 24 24"><path d="M7.5 11.5 L13 9 L18.5 11.5 V18 L13 20.5 L7.5 18 Z" fill="#c9c9c9" stroke="#9a9a9a"/><path d="M7.5 11.5 L13 14 L18.5 11.5 M13 14 V20.5" stroke="#9a9a9a" fill="none"/><path d="M13 1 V7 M2 22 L7 17.5 M24 22 L19 17.5" stroke="#18a03c" stroke-width="1.8"/><path d="M13 8.8 L10.3 5 H15.7 Z M8 16.6 L6.8 20.6 L3.6 17 Z M18 16.6 L19.2 20.6 L22.4 17 Z" fill="#18a03c"/><path d="M14 5 l3 3.6 l6.2 -7.6" fill="none" stroke="#18a03c" stroke-width="2.2"/></svg>
<svg style="position:absolute;left:6.5px;top:380.95px;" width="24" height="24" viewBox="0 0 24 24"><path d="M3.5 2 V9 Q3.5 15 10 15 H22" fill="none" stroke="#555" stroke-width="1.8"/><path d="M7 8 Q9 8 10 12 M11 8 Q13 8 14 12 M15 8 Q17 8 18 12" stroke="#2a7bd0" stroke-width="1.4" fill="none"/><path d="M6 17 L8.5 22 M10 17 L12.5 22 M14 17 L16.5 22" stroke="#d0021b" stroke-width="1.6"/><path d="M13 5 l3 3.6 l6.2 -7.6" fill="none" stroke="#18a03c" stroke-width="2.2"/></svg>
<svg style="position:absolute;left:6.5px;top:408.80px;" width="24" height="24" viewBox="0 0 24 24"><path d="M3.5 2.5 V14.5 Q3.5 20 9 20 H20.5" fill="none" stroke="#666" stroke-width="3"/><path d="M1 2.5 H6" stroke="#666" stroke-width="1.6"/><rect x="9.5" y="5.5" width="2.4" height="2.4" fill="#666"/><rect x="9.5" y="9.3" width="2.4" height="2.4" fill="#666"/><rect x="9.5" y="13.1" width="2.4" height="2.4" fill="#666"/><rect x="13.1" y="5.5" width="2.4" height="2.4" fill="#666"/><rect x="13.1" y="9.3" width="2.4" height="2.4" fill="#666"/><rect x="13.1" y="13.1" width="2.4" height="2.4" fill="#666"/><rect x="16.7" y="5.5" width="2.4" height="2.4" fill="#666"/><rect x="16.7" y="9.3" width="2.4" height="2.4" fill="#666"/><rect x="16.7" y="13.1" width="2.4" height="2.4" fill="#666"/><path d="M12.5 4.5 l3 3.6 l6.2 -7.6" fill="none" stroke="#18a03c" stroke-width="2.2"/></svg>
<div style="position:absolute;left:1px;top:433.2px;width:275px;height:613.8px;box-sizing:border-box;background:#fff;border-left:1.3px solid #a8bcd8;"></div>
<div style="position:absolute;left:2.3px;top:433.2px;width:273.7px;height:613.8px;box-sizing:border-box;background:#fff;border-left:1.4px solid #8c9cb4;border-top:1.6px solid #6b7d98;"></div>
<div style="position:absolute;left:2.3px;top:434.8px;width:273.7px;height:1px;background:#b0c4e0;"></div>
<svg style="position:absolute;left:0px;top:430px;" width="60" height="260" viewBox="0 0 60 260"><path d="M18.5 23 V234" stroke="#7d7d7d" stroke-width="1" stroke-dasharray="1 1"/><path d="M24 18.5 H33" stroke="#7d7d7d" stroke-width="1" stroke-dasharray="1 1"/><path d="M24 40.5 H33" stroke="#7d7d7d" stroke-width="1" stroke-dasharray="1 1"/><path d="M19 62.5 H33" stroke="#7d7d7d" stroke-width="1" stroke-dasharray="1 1"/><path d="M19 83.5 H33" stroke="#7d7d7d" stroke-width="1" stroke-dasharray="1 1"/><path d="M24 105.5 H33" stroke="#7d7d7d" stroke-width="1" stroke-dasharray="1 1"/><path d="M19 126.5 H33" stroke="#7d7d7d" stroke-width="1" stroke-dasharray="1 1"/><path d="M19 148.5 H33" stroke="#7d7d7d" stroke-width="1" stroke-dasharray="1 1"/><path d="M19 170.5 H33" stroke="#7d7d7d" stroke-width="1" stroke-dasharray="1 1"/><path d="M24 191.5 H33" stroke="#7d7d7d" stroke-width="1" stroke-dasharray="1 1"/><path d="M19 213.5 H33" stroke="#7d7d7d" stroke-width="1" stroke-dasharray="1 1"/><path d="M19 234.5 H33" stroke="#7d7d7d" stroke-width="1" stroke-dasharray="1 1"/></svg>
<svg style="position:absolute;left:14px;top:444px;" width="9" height="9" viewBox="0 0 9 9"><rect x="0.5" y="0.5" width="8" height="8" rx="1" fill="#fff" stroke="#8e8e8e"/><path d="M2 4.5 H7 M4.5 2 V7" stroke="#2a3a7a" stroke-width="1"/></svg>
<svg style="position:absolute;left:33.5px;top:439.4px;" width="19" height="18" viewBox="0 0 19 18"><path d="M1.2 12.2 L3.4 16.6 L18.3 0.8" fill="none" stroke="#0b9a16" stroke-width="2" stroke-linejoin="miter"/></svg>
<span class="t" style="left:57.5px;top:438.80px;font-size:15px;color:#161616;font-weight:400;letter-spacing:-0.567px;">Grid</span>
<svg style="position:absolute;left:14px;top:466px;" width="9" height="9" viewBox="0 0 9 9"><rect x="0.5" y="0.5" width="8" height="8" rx="1" fill="#fff" stroke="#8e8e8e"/><path d="M2 4.5 H7 M4.5 2 V7" stroke="#2a3a7a" stroke-width="1"/></svg>
<svg style="position:absolute;left:33.5px;top:461.0px;" width="19" height="18" viewBox="0 0 19 18"><path d="M1.2 12.2 L3.4 16.6 L18.3 0.8" fill="none" stroke="#0b9a16" stroke-width="2" stroke-linejoin="miter"/></svg>
<span class="t" style="left:57.5px;top:460.40px;font-size:15px;color:#161616;font-weight:400;letter-spacing:-0.542px;">Array Properties</span>
<span class="t" style="left:57.5px;top:482.00px;font-size:15px;color:#161616;font-weight:400;letter-spacing:-0.560px;">Rock Compressibility</span>
<span class="t" style="left:57.5px;top:503.60px;font-size:15px;color:#161616;font-weight:400;letter-spacing:-0.581px;">Sectors</span>
<svg style="position:absolute;left:14px;top:531px;" width="9" height="9" viewBox="0 0 9 9"><rect x="0.5" y="0.5" width="8" height="8" rx="1" fill="#fff" stroke="#8e8e8e"/><path d="M2 4.5 H7 M4.5 2 V7" stroke="#2a3a7a" stroke-width="1"/></svg>
<svg style="position:absolute;left:33.5px;top:525.8px;" width="19" height="18" viewBox="0 0 19 18"><path d="M1.2 12.2 L3.4 16.6 L18.3 0.8" fill="none" stroke="#0b9a16" stroke-width="2" stroke-linejoin="miter"/></svg>
<span class="t" style="left:57.5px;top:525.20px;font-size:15px;color:#161616;font-weight:400;letter-spacing:-0.550px;">Aquifers</span>
<svg style="position:absolute;left:33.5px;top:547.4px;" width="19" height="18" viewBox="0 0 19 18"><path d="M1.2 12.2 L3.4 16.6 L18.3 0.8" fill="none" stroke="#0b9a16" stroke-width="2" stroke-linejoin="miter"/></svg>
<span class="t" style="left:57.5px;top:546.80px;font-size:15px;color:#161616;font-weight:400;letter-spacing:-0.606px;">Lease Planes</span>
<svg style="position:absolute;left:33.5px;top:569.0px;" width="19" height="18" viewBox="0 0 19 18"><path d="M1.2 12.2 L3.4 16.6 L18.3 0.8" fill="none" stroke="#0b9a16" stroke-width="2" stroke-linejoin="miter"/></svg>
<span class="t" style="left:57.5px;top:568.40px;font-size:15px;color:#161616;font-weight:400;letter-spacing:-0.631px;">Rock Compaction</span>
<span class="t" style="left:57.5px;top:590.00px;font-size:15px;color:#161616;font-weight:400;letter-spacing:-0.640px;">Compaction</span>
<svg style="position:absolute;left:14px;top:617px;" width="9" height="9" viewBox="0 0 9 9"><rect x="0.5" y="0.5" width="8" height="8" rx="1" fill="#fff" stroke="#8e8e8e"/><path d="M2 4.5 H7 M4.5 2 V7" stroke="#2a3a7a" stroke-width="1"/></svg>
<span class="t" style="left:57.5px;top:611.60px;font-size:15px;color:#161616;font-weight:400;letter-spacing:-0.591px;">Options</span>
<span class="t" style="left:57.5px;top:633.20px;font-size:15px;color:#161616;font-weight:400;letter-spacing:-0.552px;">Flux Sector</span>
<span class="t" style="left:57.5px;top:654.80px;font-size:15px;color:#161616;font-weight:400;letter-spacing:-0.595px;">Flux Boundary</span>
<div style="position:absolute;left:276px;top:186px;width:16px;height:861px;background:linear-gradient(90deg,#7f93b2 0,#7f93b2 1px,#d7e7fb 1px,#d7e7fb 5px,#9ab6e5 5px,#9ab6e5 11px,#cbddf6 11px,#cbddf6 15px,#6e819f 15px,#6e819f 16px);"></div>
<svg style="position:absolute;left:0;top:0" width="1233" height="1057" viewBox="0 0 1233 1057"><defs><clipPath id="sclip"><polygon points="423,871 444,867.5 480,859 526,849.5 585,833 620,824.6 644,820 669,805 693,789 717,769.5 742,753 766,734 782,721 798,709.5 813.6,699.5 839.5,693 865.5,684 881,677 932,656 970,645 1031,636 1058,629 1071,621 1096,606 1137,598 1165,591 1213,571 1234,557.5 1234,923 1154,936 1051,950 949,958 813,961 706,967 650,969 597,972.5 575,948 558,928 544,915 527,911 498,901 468,891.5 444,881.5 423,881.5"/></clipPath>
<pattern id="dotp" width="4.2" height="5.6" patternUnits="userSpaceOnUse" patternTransform="rotate(-15)"><rect x="0" y="0" width="1.1" height="1.1" fill="#f6ee96"/></pattern>
<filter id="b2" x="-10%" y="-50%" width="120%" height="200%"><feGaussianBlur stdDeviation="2"/></filter>
<filter id="b3" x="-10%" y="-10%" width="120%" height="120%"><feGaussianBlur stdDeviation="3"/></filter>
<filter id="bh" filterUnits="userSpaceOnUse" x="380" y="520" width="900" height="480"><feGaussianBlur stdDeviation="5 0"/></filter>
<filter id="b6" x="-10%" y="-10%" width="120%" height="120%"><feGaussianBlur stdDeviation="6"/></filter>
<linearGradient id="sg0" gradientUnits="userSpaceOnUse" x1="0" y1="870.3" x2="0" y2="882.0"><stop offset="0.0000" stop-color="#e87800"/><stop offset="0.0000" stop-color="#e87800"/><stop offset="0.0000" stop-color="#e87800"/><stop offset="0.0000" stop-color="#e87800"/><stop offset="0.0000" stop-color="#e87800"/><stop offset="0.0000" stop-color="#e87800"/><stop offset="0.0000" stop-color="#e87800"/><stop offset="0.0000" stop-color="#e87800"/><stop offset="0.0000" stop-color="#e87800"/><stop offset="0.0000" stop-color="#e87800"/><stop offset="0.0000" stop-color="#e87800"/><stop offset="1.0000" stop-color="#e87800"/></linearGradient><linearGradient id="sg1" gradientUnits="userSpaceOnUse" x1="0" y1="869.0" x2="0" y2="882.0"><stop offset="0.0000" stop-color="#e77900"/><stop offset="0.0000" stop-color="#e77900"/><stop offset="0.0000" stop-color="#e77900"/><stop offset="0.0000" stop-color="#e77900"/><stop offset="0.0000" stop-color="#e77900"/><stop offset="0.0000" stop-color="#e77900"/><stop offset="0.0000" stop-color="#e77900"/><stop offset="0.0000" stop-color="#e77900"/><stop offset="0.0000" stop-color="#e77900"/><stop offset="0.0000" stop-color="#e77900"/><stop offset="0.0000" stop-color="#e77900"/><stop offset="1.0000" stop-color="#e77900"/></linearGradient><linearGradient id="sg2" gradientUnits="userSpaceOnUse" x1="0" y1="867.7" x2="0" y2="882.0"><stop offset="0.0000" stop-color="#e18700"/><stop offset="0.0233" stop-color="#e18700"/><stop offset="0.0465" stop-color="#df8b00"/><stop offset="0.0698" stop-color="#dd8d00"/><stop offset="0.1163" stop-color="#dd8d00"/><stop offset="0.1628" stop-color="#dc8f00"/><stop offset="0.2093" stop-color="#dc8f00"/><stop offset="0.2558" stop-color="#dc8f00"/><stop offset="0.2791" stop-color="#dc8f00"/><stop offset="0.3023" stop-color="#dc8f00"/><stop offset="0.3256" stop-color="#dc8f00"/><stop offset="1.0000" stop-color="#dc8f00"/></linearGradient><linearGradient id="sg3" gradientUnits="userSpaceOnUse" x1="0" y1="866.1" x2="0" y2="883.5"><stop offset="0.0000" stop-color="#d89f00"/><stop offset="0.0574" stop-color="#d89f00"/><stop offset="0.1147" stop-color="#d0ab00"/><stop offset="0.1750" stop-color="#ccb400"/><stop offset="0.2985" stop-color="#ccb400"/><stop offset="0.4423" stop-color="#c8b800"/><stop offset="0.5802" stop-color="#c8b800"/><stop offset="0.7182" stop-color="#c8b900"/><stop offset="0.8163" stop-color="#c8b800"/><stop offset="0.8794" stop-color="#c8b800"/><stop offset="0.9397" stop-color="#c8b800"/><stop offset="1.0000" stop-color="#c8b800"/></linearGradient><linearGradient id="sg4" gradientUnits="userSpaceOnUse" x1="0" y1="864.3" x2="0" y2="886.6"><stop offset="0.0000" stop-color="#d99e00"/><stop offset="0.0449" stop-color="#d99e00"/><stop offset="0.0897" stop-color="#d1aa00"/><stop offset="0.1414" stop-color="#cdb300"/><stop offset="0.2516" stop-color="#cbb500"/><stop offset="0.4094" stop-color="#c7b900"/><stop offset="0.5537" stop-color="#c8b900"/><stop offset="0.6979" stop-color="#c9ba00"/><stop offset="0.8382" stop-color="#c7b800"/><stop offset="0.8966" stop-color="#c7b800"/><stop offset="0.9483" stop-color="#c7b800"/><stop offset="1.0000" stop-color="#c7b700"/></linearGradient><linearGradient id="sg5" gradientUnits="userSpaceOnUse" x1="0" y1="862.4" x2="0" y2="889.6"><stop offset="0.0000" stop-color="#da9c00"/><stop offset="0.0368" stop-color="#da9c00"/><stop offset="0.0737" stop-color="#d2a900"/><stop offset="0.1198" stop-color="#cdb300"/><stop offset="0.2214" stop-color="#cbb600"/><stop offset="0.3883" stop-color="#c7b900"/><stop offset="0.5366" stop-color="#c8ba00"/><stop offset="0.6848" stop-color="#c9bb00"/><stop offset="0.8522" stop-color="#c7b800"/><stop offset="0.9077" stop-color="#c7b800"/><stop offset="0.9538" stop-color="#c7b800"/><stop offset="1.0000" stop-color="#c6b700"/></linearGradient><linearGradient id="sg6" gradientUnits="userSpaceOnUse" x1="0" y1="860.6" x2="0" y2="892.6"><stop offset="0.0000" stop-color="#db9a00"/><stop offset="0.0312" stop-color="#db9a00"/><stop offset="0.0625" stop-color="#d3a800"/><stop offset="0.1048" stop-color="#cdb300"/><stop offset="0.2005" stop-color="#cbb700"/><stop offset="0.3737" stop-color="#c7b900"/><stop offset="0.5247" stop-color="#c8bb00"/><stop offset="0.6758" stop-color="#c9bc00"/><stop offset="0.8620" stop-color="#c7b800"/><stop offset="0.9154" stop-color="#c7b800"/><stop offset="0.9577" stop-color="#c7b800"/><stop offset="1.0000" stop-color="#c5b700"/></linearGradient><linearGradient id="sg7" gradientUnits="userSpaceOnUse" x1="0" y1="858.8" x2="0" y2="895.7"><stop offset="0.0000" stop-color="#dc9900"/><stop offset="0.0271" stop-color="#dc9900"/><stop offset="0.0542" stop-color="#d4a700"/><stop offset="0.0937" stop-color="#ceb200"/><stop offset="0.1850" stop-color="#cab800"/><stop offset="0.3629" stop-color="#c6ba00"/><stop offset="0.5160" stop-color="#c8bc00"/><stop offset="0.6691" stop-color="#cabd00"/><stop offset="0.8692" stop-color="#c6b800"/><stop offset="0.9210" stop-color="#c6b800"/><stop offset="0.9605" stop-color="#c6b800"/><stop offset="1.0000" stop-color="#c4b600"/></linearGradient><linearGradient id="sg8" gradientUnits="userSpaceOnUse" x1="0" y1="857.0" x2="0" y2="898.7"><stop offset="0.0000" stop-color="#dc9700"/><stop offset="0.0240" stop-color="#dc9700"/><stop offset="0.0479" stop-color="#d4a500"/><stop offset="0.0852" stop-color="#ceb200"/><stop offset="0.1732" stop-color="#cab800"/><stop offset="0.3546" stop-color="#c6ba00"/><stop offset="0.5093" stop-color="#c8bc00"/><stop offset="0.6639" stop-color="#cabf00"/><stop offset="0.8747" stop-color="#c6b800"/><stop offset="0.9254" stop-color="#c6b800"/><stop offset="0.9627" stop-color="#c6b800"/><stop offset="1.0000" stop-color="#c4b600"/></linearGradient><linearGradient id="sg9" gradientUnits="userSpaceOnUse" x1="0" y1="855.2" x2="0" y2="901.7"><stop offset="0.0000" stop-color="#dd9500"/><stop offset="0.0215" stop-color="#dd9500"/><stop offset="0.0429" stop-color="#d5a400"/><stop offset="0.0785" stop-color="#cfb100"/><stop offset="0.1638" stop-color="#c9b900"/><stop offset="0.3480" stop-color="#c5bb00"/><stop offset="0.5039" stop-color="#c8bd00"/><stop offset="0.6599" stop-color="#cbc000"/><stop offset="0.8791" stop-color="#c5b800"/><stop offset="0.9288" stop-color="#c5b800"/><stop offset="0.9644" stop-color="#c5b800"/><stop offset="1.0000" stop-color="#c3b500"/></linearGradient><linearGradient id="sg10" gradientUnits="userSpaceOnUse" x1="0" y1="853.3" x2="0" y2="904.8"><stop offset="0.0000" stop-color="#de9400"/><stop offset="0.0194" stop-color="#de9400"/><stop offset="0.0389" stop-color="#d6a300"/><stop offset="0.0731" stop-color="#cfb100"/><stop offset="0.1562" stop-color="#c9ba00"/><stop offset="0.3427" stop-color="#c5bb00"/><stop offset="0.4996" stop-color="#c8be00"/><stop offset="0.6566" stop-color="#cbc100"/><stop offset="0.8827" stop-color="#c5b800"/><stop offset="0.9316" stop-color="#c5b800"/><stop offset="0.9658" stop-color="#c5b800"/><stop offset="1.0000" stop-color="#c2b500"/></linearGradient><linearGradient id="sg11" gradientUnits="userSpaceOnUse" x1="0" y1="851.5" x2="0" y2="907.8"><stop offset="0.0000" stop-color="#df9200"/><stop offset="0.0178" stop-color="#df9200"/><stop offset="0.0355" stop-color="#d7a200"/><stop offset="0.0686" stop-color="#cfb100"/><stop offset="0.1499" stop-color="#c9bb00"/><stop offset="0.3383" stop-color="#c5bb00"/><stop offset="0.4961" stop-color="#c8bf00"/><stop offset="0.6539" stop-color="#cbc200"/><stop offset="0.8856" stop-color="#c5b800"/><stop offset="0.9339" stop-color="#c5b800"/><stop offset="0.9670" stop-color="#c5b800"/><stop offset="1.0000" stop-color="#c1b500"/></linearGradient><linearGradient id="sg12" gradientUnits="userSpaceOnUse" x1="0" y1="849.7" x2="0" y2="910.9"><stop offset="0.0000" stop-color="#e09100"/><stop offset="0.0163" stop-color="#e09100"/><stop offset="0.0327" stop-color="#d8a000"/><stop offset="0.0648" stop-color="#d0b000"/><stop offset="0.1446" stop-color="#c8bc00"/><stop offset="0.3346" stop-color="#c4bc00"/><stop offset="0.4931" stop-color="#c8c000"/><stop offset="0.6516" stop-color="#ccc400"/><stop offset="0.8881" stop-color="#c4b800"/><stop offset="0.9359" stop-color="#c4b800"/><stop offset="0.9679" stop-color="#c4b800"/><stop offset="1.0000" stop-color="#c0b400"/></linearGradient><linearGradient id="sg13" gradientUnits="userSpaceOnUse" x1="0" y1="847.7" x2="0" y2="916.1"><stop offset="0.0000" stop-color="#de9300"/><stop offset="0.0156" stop-color="#de9300"/><stop offset="0.0322" stop-color="#d6a200"/><stop offset="0.0693" stop-color="#ceb100"/><stop offset="0.1543" stop-color="#c4bb00"/><stop offset="0.3356" stop-color="#c2bc00"/><stop offset="0.4868" stop-color="#c7c100"/><stop offset="0.6379" stop-color="#ccc400"/><stop offset="0.8947" stop-color="#c4b800"/><stop offset="0.9376" stop-color="#c4b800"/><stop offset="0.9658" stop-color="#c4b800"/><stop offset="1.0000" stop-color="#c0b500"/></linearGradient><linearGradient id="sg14" gradientUnits="userSpaceOnUse" x1="0" y1="845.7" x2="0" y2="922.7"><stop offset="0.0000" stop-color="#da9800"/><stop offset="0.0153" stop-color="#da9800"/><stop offset="0.0328" stop-color="#d4a600"/><stop offset="0.0770" stop-color="#cab200"/><stop offset="0.1692" stop-color="#bdbb00"/><stop offset="0.3387" stop-color="#bebd00"/><stop offset="0.4798" stop-color="#c7c100"/><stop offset="0.6210" stop-color="#cdc500"/><stop offset="0.9023" stop-color="#c4b900"/><stop offset="0.9390" stop-color="#c4b900"/><stop offset="0.9626" stop-color="#c4b900"/><stop offset="1.0000" stop-color="#c1b500"/></linearGradient><linearGradient id="sg15" gradientUnits="userSpaceOnUse" x1="0" y1="843.6" x2="0" y2="929.3"><stop offset="0.0000" stop-color="#d79e00"/><stop offset="0.0150" stop-color="#d79e00"/><stop offset="0.0333" stop-color="#d1a900"/><stop offset="0.0831" stop-color="#c7b300"/><stop offset="0.1812" stop-color="#b6ba00"/><stop offset="0.3411" stop-color="#babd00"/><stop offset="0.4743" stop-color="#c6c200"/><stop offset="0.6075" stop-color="#cdc500"/><stop offset="0.9084" stop-color="#c4b900"/><stop offset="0.9401" stop-color="#c4b900"/><stop offset="0.9601" stop-color="#c4b900"/><stop offset="1.0000" stop-color="#c1b600"/></linearGradient><linearGradient id="sg16" gradientUnits="userSpaceOnUse" x1="0" y1="841.6" x2="0" y2="935.9"><stop offset="0.0000" stop-color="#d3a300"/><stop offset="0.0148" stop-color="#d3a300"/><stop offset="0.0337" stop-color="#cfad00"/><stop offset="0.0881" stop-color="#c3b500"/><stop offset="0.1909" stop-color="#afb900"/><stop offset="0.3430" stop-color="#b6be00"/><stop offset="0.4698" stop-color="#c5c300"/><stop offset="0.5965" stop-color="#cec600"/><stop offset="0.9133" stop-color="#c4ba00"/><stop offset="0.9410" stop-color="#c4ba00"/><stop offset="0.9580" stop-color="#c4ba00"/><stop offset="1.0000" stop-color="#c2b700"/></linearGradient><linearGradient id="sg17" gradientUnits="userSpaceOnUse" x1="0" y1="839.5" x2="0" y2="942.5"><stop offset="0.0000" stop-color="#d0a800"/><stop offset="0.0146" stop-color="#d0a800"/><stop offset="0.0340" stop-color="#ccb000"/><stop offset="0.0922" stop-color="#c0b600"/><stop offset="0.1990" stop-color="#a8b800"/><stop offset="0.3447" stop-color="#b2be00"/><stop offset="0.4660" stop-color="#c4c400"/><stop offset="0.5874" stop-color="#cec600"/><stop offset="0.9175" stop-color="#c4ba00"/><stop offset="0.9417" stop-color="#c4ba00"/><stop offset="0.9563" stop-color="#c4ba00"/><stop offset="1.0000" stop-color="#c2b800"/></linearGradient><linearGradient id="sg18" gradientUnits="userSpaceOnUse" x1="0" y1="837.4" x2="0" y2="949.1"><stop offset="0.0000" stop-color="#cdad00"/><stop offset="0.0144" stop-color="#cdad00"/><stop offset="0.0343" stop-color="#c9b300"/><stop offset="0.0957" stop-color="#bdb700"/><stop offset="0.2059" stop-color="#a1b700"/><stop offset="0.3460" stop-color="#aebe00"/><stop offset="0.4628" stop-color="#c3c500"/><stop offset="0.5796" stop-color="#cec600"/><stop offset="0.9210" stop-color="#c4ba00"/><stop offset="0.9424" stop-color="#c4ba00"/><stop offset="0.9549" stop-color="#c4ba00"/><stop offset="1.0000" stop-color="#c2b900"/></linearGradient><linearGradient id="sg19" gradientUnits="userSpaceOnUse" x1="0" y1="835.4" x2="0" y2="955.7"><stop offset="0.0000" stop-color="#c9b200"/><stop offset="0.0143" stop-color="#c9b200"/><stop offset="0.0345" stop-color="#c7b700"/><stop offset="0.0987" stop-color="#b9b900"/><stop offset="0.2118" stop-color="#9ab600"/><stop offset="0.3472" stop-color="#aabf00"/><stop offset="0.4601" stop-color="#c2c600"/><stop offset="0.5730" stop-color="#cfc700"/><stop offset="0.9239" stop-color="#c4bb00"/><stop offset="0.9429" stop-color="#c4bb00"/><stop offset="0.9536" stop-color="#c4bb00"/><stop offset="1.0000" stop-color="#c3ba00"/></linearGradient><linearGradient id="sg20" gradientUnits="userSpaceOnUse" x1="0" y1="833.3" x2="0" y2="962.3"><stop offset="0.0000" stop-color="#c6b800"/><stop offset="0.0141" stop-color="#c6b800"/><stop offset="0.0347" stop-color="#c4ba00"/><stop offset="0.1013" stop-color="#b6ba00"/><stop offset="0.2168" stop-color="#93b500"/><stop offset="0.3482" stop-color="#a6bf00"/><stop offset="0.4578" stop-color="#c1c700"/><stop offset="0.5673" stop-color="#cfc700"/><stop offset="0.9265" stop-color="#c4bb00"/><stop offset="0.9434" stop-color="#c4bb00"/><stop offset="0.9525" stop-color="#c4bb00"/><stop offset="1.0000" stop-color="#c3bb00"/></linearGradient><linearGradient id="sg21" gradientUnits="userSpaceOnUse" x1="0" y1="831.3" x2="0" y2="968.9"><stop offset="0.0000" stop-color="#c2bd00"/><stop offset="0.0140" stop-color="#c2bd00"/><stop offset="0.0349" stop-color="#c2be00"/><stop offset="0.1036" stop-color="#b2bb00"/><stop offset="0.2213" stop-color="#8cb500"/><stop offset="0.3491" stop-color="#a2c000"/><stop offset="0.4557" stop-color="#c1c700"/><stop offset="0.5623" stop-color="#d0c800"/><stop offset="0.9288" stop-color="#c4bc00"/><stop offset="0.9438" stop-color="#c4bc00"/><stop offset="0.9516" stop-color="#c4bc00"/><stop offset="1.0000" stop-color="#c4bb00"/></linearGradient><linearGradient id="sg22" gradientUnits="userSpaceOnUse" x1="0" y1="829.2" x2="0" y2="972.8"><stop offset="0.0000" stop-color="#bfc000"/><stop offset="0.0139" stop-color="#bfc000"/><stop offset="0.0361" stop-color="#bec000"/><stop offset="0.1036" stop-color="#aebd00"/><stop offset="0.2212" stop-color="#85b501"/><stop offset="0.3494" stop-color="#9dc101"/><stop offset="0.4602" stop-color="#bfc800"/><stop offset="0.5667" stop-color="#d0c800"/><stop offset="0.9308" stop-color="#c4bc00"/><stop offset="0.9447" stop-color="#c4bc00"/><stop offset="0.9521" stop-color="#c4bc00"/><stop offset="1.0000" stop-color="#c4bc00"/></linearGradient><linearGradient id="sg23" gradientUnits="userSpaceOnUse" x1="0" y1="827.1" x2="0" y2="972.3"><stop offset="0.0000" stop-color="#bcc000"/><stop offset="0.0138" stop-color="#bcc000"/><stop offset="0.0390" stop-color="#b9c000"/><stop offset="0.1003" stop-color="#a9bf00"/><stop offset="0.2143" stop-color="#7db804"/><stop offset="0.3489" stop-color="#95c404"/><stop offset="0.4749" stop-color="#bcc800"/><stop offset="0.5858" stop-color="#d0c700"/><stop offset="0.9326" stop-color="#c5bd00"/><stop offset="0.9464" stop-color="#c5bd00"/><stop offset="0.9548" stop-color="#c5bd00"/><stop offset="1.0000" stop-color="#c5bd00"/></linearGradient><linearGradient id="sg24" gradientUnits="userSpaceOnUse" x1="0" y1="825.1" x2="0" y2="971.9"><stop offset="0.0000" stop-color="#bac000"/><stop offset="0.0136" stop-color="#bac000"/><stop offset="0.0418" stop-color="#b4c000"/><stop offset="0.0970" stop-color="#a4c100"/><stop offset="0.2076" stop-color="#76ba06"/><stop offset="0.3484" stop-color="#8ec606"/><stop offset="0.4894" stop-color="#bac800"/><stop offset="0.6045" stop-color="#d0c600"/><stop offset="0.9345" stop-color="#c6be00"/><stop offset="0.9481" stop-color="#c6be00"/><stop offset="0.9575" stop-color="#c6be00"/><stop offset="1.0000" stop-color="#c6be00"/></linearGradient><linearGradient id="sg25" gradientUnits="userSpaceOnUse" x1="0" y1="823.0" x2="0" y2="971.4"><stop offset="0.0000" stop-color="#b7c000"/><stop offset="0.0135" stop-color="#b7c000"/><stop offset="0.0446" stop-color="#afc000"/><stop offset="0.0938" stop-color="#9fc200"/><stop offset="0.2011" stop-color="#6ebd09"/><stop offset="0.3478" stop-color="#86c909"/><stop offset="0.5035" stop-color="#b7c800"/><stop offset="0.6228" stop-color="#d0c600"/><stop offset="0.9363" stop-color="#c6be00"/><stop offset="0.9497" stop-color="#c6be00"/><stop offset="0.9601" stop-color="#c6be00"/><stop offset="1.0000" stop-color="#c6be00"/></linearGradient><linearGradient id="sg26" gradientUnits="userSpaceOnUse" x1="0" y1="820.9" x2="0" y2="970.9"><stop offset="0.0000" stop-color="#b5c000"/><stop offset="0.0133" stop-color="#b5c000"/><stop offset="0.0473" stop-color="#aac000"/><stop offset="0.0907" stop-color="#9ac400"/><stop offset="0.1947" stop-color="#66bf0b"/><stop offset="0.3473" stop-color="#7ecb0b"/><stop offset="0.5173" stop-color="#b5c800"/><stop offset="0.6407" stop-color="#d0c500"/><stop offset="0.9380" stop-color="#c7bf00"/><stop offset="0.9513" stop-color="#c7bf00"/><stop offset="0.9627" stop-color="#c7bf00"/><stop offset="1.0000" stop-color="#c7bf00"/></linearGradient><linearGradient id="sg27" gradientUnits="userSpaceOnUse" x1="0" y1="818.8" x2="0" y2="970.4"><stop offset="0.0000" stop-color="#b2c000"/><stop offset="0.0132" stop-color="#b2c000"/><stop offset="0.0500" stop-color="#a4c000"/><stop offset="0.0876" stop-color="#94c600"/><stop offset="0.1884" stop-color="#5fc20e"/><stop offset="0.3468" stop-color="#77ce0e"/><stop offset="0.5309" stop-color="#b2c800"/><stop offset="0.6582" stop-color="#d0c500"/><stop offset="0.9397" stop-color="#c7bf00"/><stop offset="0.9529" stop-color="#c7bf00"/><stop offset="0.9652" stop-color="#c7bf00"/><stop offset="1.0000" stop-color="#c7bf00"/></linearGradient><linearGradient id="sg28" gradientUnits="userSpaceOnUse" x1="0" y1="816.3" x2="0" y2="970.0"><stop offset="0.0000" stop-color="#aec001"/><stop offset="0.0129" stop-color="#aec001"/><stop offset="0.0513" stop-color="#9ec001"/><stop offset="0.0833" stop-color="#8ec801"/><stop offset="0.1809" stop-color="#57c410"/><stop offset="0.3462" stop-color="#70d010"/><stop offset="0.5428" stop-color="#b0c800"/><stop offset="0.6738" stop-color="#d0c400"/><stop offset="0.9416" stop-color="#c8c000"/><stop offset="0.9547" stop-color="#c8c000"/><stop offset="0.9677" stop-color="#c8c000"/><stop offset="1.0000" stop-color="#c8c000"/></linearGradient><linearGradient id="sg29" gradientUnits="userSpaceOnUse" x1="0" y1="810.7" x2="0" y2="969.6"><stop offset="0.0000" stop-color="#9ac40d"/><stop offset="0.0115" stop-color="#9ac40d"/><stop offset="0.0435" stop-color="#8dc40d"/><stop offset="0.0705" stop-color="#80cb0d"/><stop offset="0.1648" stop-color="#51c513"/><stop offset="0.3448" stop-color="#6ccf0f"/><stop offset="0.5449" stop-color="#acca00"/><stop offset="0.6786" stop-color="#d0c400"/><stop offset="0.9445" stop-color="#cbc100"/><stop offset="0.9582" stop-color="#cbc100"/><stop offset="0.9708" stop-color="#cbc100"/><stop offset="1.0000" stop-color="#cbc100"/></linearGradient><linearGradient id="sg30" gradientUnits="userSpaceOnUse" x1="0" y1="805.1" x2="0" y2="969.3"><stop offset="0.0000" stop-color="#87c818"/><stop offset="0.0101" stop-color="#87c818"/><stop offset="0.0363" stop-color="#7dc818"/><stop offset="0.0585" stop-color="#72cd18"/><stop offset="0.1498" stop-color="#4ac515"/><stop offset="0.3434" stop-color="#68cf0f"/><stop offset="0.5468" stop-color="#a8cc00"/><stop offset="0.6831" stop-color="#d0c400"/><stop offset="0.9473" stop-color="#cdc300"/><stop offset="0.9615" stop-color="#cdc300"/><stop offset="0.9737" stop-color="#cdc300"/><stop offset="1.0000" stop-color="#cdc300"/></linearGradient><linearGradient id="sg31" gradientUnits="userSpaceOnUse" x1="0" y1="799.5" x2="0" y2="969.0"><stop offset="0.0000" stop-color="#74cc24"/><stop offset="0.0088" stop-color="#74cc24"/><stop offset="0.0295" stop-color="#6ccc24"/><stop offset="0.0472" stop-color="#64d024"/><stop offset="0.1357" stop-color="#44c618"/><stop offset="0.3422" stop-color="#64ce0e"/><stop offset="0.5487" stop-color="#a4ce00"/><stop offset="0.6873" stop-color="#d0c400"/><stop offset="0.9499" stop-color="#d0c400"/><stop offset="0.9646" stop-color="#d0c400"/><stop offset="0.9764" stop-color="#d0c400"/><stop offset="1.0000" stop-color="#d0c400"/></linearGradient><linearGradient id="sg32" gradientUnits="userSpaceOnUse" x1="0" y1="793.9" x2="0" y2="968.7"><stop offset="0.0000" stop-color="#61d030"/><stop offset="0.0077" stop-color="#61d030"/><stop offset="0.0231" stop-color="#5bd030"/><stop offset="0.0366" stop-color="#56d330"/><stop offset="0.1224" stop-color="#3ec71b"/><stop offset="0.3410" stop-color="#60cd0d"/><stop offset="0.5504" stop-color="#a0d000"/><stop offset="0.6913" stop-color="#d0c400"/><stop offset="0.9523" stop-color="#d3c500"/><stop offset="0.9675" stop-color="#d3c500"/><stop offset="0.9789" stop-color="#d3c500"/><stop offset="1.0000" stop-color="#d3c500"/></linearGradient><linearGradient id="sg33" gradientUnits="userSpaceOnUse" x1="0" y1="788.3" x2="0" y2="968.4"><stop offset="0.0000" stop-color="#4ed43b"/><stop offset="0.0066" stop-color="#4ed43b"/><stop offset="0.0171" stop-color="#4bd43b"/><stop offset="0.0267" stop-color="#48d53b"/><stop offset="0.1100" stop-color="#37c71d"/><stop offset="0.3399" stop-color="#5ccd0d"/><stop offset="0.5520" stop-color="#9cd200"/><stop offset="0.6950" stop-color="#d0c400"/><stop offset="0.9546" stop-color="#d5c700"/><stop offset="0.9702" stop-color="#d5c700"/><stop offset="0.9813" stop-color="#d5c700"/><stop offset="1.0000" stop-color="#d5c700"/></linearGradient><linearGradient id="sg34" gradientUnits="userSpaceOnUse" x1="0" y1="782.7" x2="0" y2="968.0"><stop offset="0.0000" stop-color="#3ad847"/><stop offset="0.0055" stop-color="#3ad847"/><stop offset="0.0114" stop-color="#3ad847"/><stop offset="0.0173" stop-color="#3ad847"/><stop offset="0.0982" stop-color="#31c820"/><stop offset="0.3388" stop-color="#58cc0c"/><stop offset="0.5536" stop-color="#98d400"/><stop offset="0.6985" stop-color="#d0c400"/><stop offset="0.9567" stop-color="#d8c800"/><stop offset="0.9728" stop-color="#d8c800"/><stop offset="0.9836" stop-color="#d8c800"/><stop offset="1.0000" stop-color="#d8c800"/></linearGradient><linearGradient id="sg35" gradientUnits="userSpaceOnUse" x1="0" y1="776.6" x2="0" y2="967.6"><stop offset="0.0000" stop-color="#35d64a"/><stop offset="0.0052" stop-color="#35d64a"/><stop offset="0.0105" stop-color="#35d64a"/><stop offset="0.0163" stop-color="#35d64a"/><stop offset="0.1040" stop-color="#2ec920"/><stop offset="0.3304" stop-color="#53cc0c"/><stop offset="0.5569" stop-color="#98d400"/><stop offset="0.7038" stop-color="#d0c400"/><stop offset="0.9569" stop-color="#d8c800"/><stop offset="0.9726" stop-color="#d8c800"/><stop offset="0.9837" stop-color="#d8c800"/><stop offset="1.0000" stop-color="#d8c800"/></linearGradient><linearGradient id="sg36" gradientUnits="userSpaceOnUse" x1="0" y1="770.5" x2="0" y2="967.2"><stop offset="0.0000" stop-color="#32d44c"/><stop offset="0.0051" stop-color="#32d44c"/><stop offset="0.0102" stop-color="#32d44c"/><stop offset="0.0165" stop-color="#32d44c"/><stop offset="0.1118" stop-color="#2cca20"/><stop offset="0.3215" stop-color="#4ecc0d"/><stop offset="0.5604" stop-color="#98d400"/><stop offset="0.7090" stop-color="#d0c400"/><stop offset="0.9568" stop-color="#d8c800"/><stop offset="0.9720" stop-color="#d8c800"/><stop offset="0.9835" stop-color="#d8c800"/><stop offset="1.0000" stop-color="#d8c800"/></linearGradient><linearGradient id="sg37" gradientUnits="userSpaceOnUse" x1="0" y1="764.4" x2="0" y2="966.9"><stop offset="0.0000" stop-color="#2fd24e"/><stop offset="0.0049" stop-color="#2fd24e"/><stop offset="0.0099" stop-color="#2fd24e"/><stop offset="0.0167" stop-color="#2fd24e"/><stop offset="0.1192" stop-color="#2acb20"/><stop offset="0.3130" stop-color="#49cc0e"/><stop offset="0.5636" stop-color="#98d400"/><stop offset="0.7140" stop-color="#d0c400"/><stop offset="0.9567" stop-color="#d8c800"/><stop offset="0.9715" stop-color="#d8c800"/><stop offset="0.9833" stop-color="#d8c800"/><stop offset="1.0000" stop-color="#d8c800"/></linearGradient><linearGradient id="sg38" gradientUnits="userSpaceOnUse" x1="0" y1="758.2" x2="0" y2="966.5"><stop offset="0.0000" stop-color="#2cd050"/><stop offset="0.0048" stop-color="#2cd050"/><stop offset="0.0096" stop-color="#2cd050"/><stop offset="0.0169" stop-color="#2cd050"/><stop offset="0.1262" stop-color="#28cc20"/><stop offset="0.3051" stop-color="#43cc0e"/><stop offset="0.5666" stop-color="#98d400"/><stop offset="0.7186" stop-color="#d0c400"/><stop offset="0.9566" stop-color="#d8c800"/><stop offset="0.9710" stop-color="#d8c800"/><stop offset="0.9831" stop-color="#d8c800"/><stop offset="1.0000" stop-color="#d8c800"/></linearGradient><linearGradient id="sg39" gradientUnits="userSpaceOnUse" x1="0" y1="752.1" x2="0" y2="966.0"><stop offset="0.0000" stop-color="#28ce52"/><stop offset="0.0047" stop-color="#28ce52"/><stop offset="0.0093" stop-color="#28ce52"/><stop offset="0.0171" stop-color="#28ce52"/><stop offset="0.1327" stop-color="#26cd20"/><stop offset="0.2975" stop-color="#3ecc0f"/><stop offset="0.5695" stop-color="#98d400"/><stop offset="0.7231" stop-color="#d0c400"/><stop offset="0.9565" stop-color="#d8c800"/><stop offset="0.9706" stop-color="#d8c800"/><stop offset="0.9829" stop-color="#d8c800"/><stop offset="1.0000" stop-color="#d8c800"/></linearGradient><linearGradient id="sg40" gradientUnits="userSpaceOnUse" x1="0" y1="746.0" x2="0" y2="965.6"><stop offset="0.0000" stop-color="#25cb55"/><stop offset="0.0046" stop-color="#25cb55"/><stop offset="0.0091" stop-color="#25cb55"/><stop offset="0.0172" stop-color="#25cb55"/><stop offset="0.1390" stop-color="#23ce20"/><stop offset="0.2903" stop-color="#39cc0f"/><stop offset="0.5723" stop-color="#98d400"/><stop offset="0.7273" stop-color="#d0c400"/><stop offset="0.9565" stop-color="#d8c800"/><stop offset="0.9701" stop-color="#d8c800"/><stop offset="0.9828" stop-color="#d8c800"/><stop offset="1.0000" stop-color="#d8c800"/></linearGradient><linearGradient id="sg41" gradientUnits="userSpaceOnUse" x1="0" y1="739.8" x2="0" y2="965.2"><stop offset="0.0000" stop-color="#22c957"/><stop offset="0.0044" stop-color="#22c957"/><stop offset="0.0089" stop-color="#22c957"/><stop offset="0.0174" stop-color="#22c957"/><stop offset="0.1449" stop-color="#21cf20"/><stop offset="0.2835" stop-color="#33cc10"/><stop offset="0.5749" stop-color="#98d400"/><stop offset="0.7312" stop-color="#d0c400"/><stop offset="0.9564" stop-color="#d8c800"/><stop offset="0.9697" stop-color="#d8c800"/><stop offset="0.9826" stop-color="#d8c800"/><stop offset="1.0000" stop-color="#d8c800"/></linearGradient><linearGradient id="sg42" gradientUnits="userSpaceOnUse" x1="0" y1="734.0" x2="0" y2="964.8"><stop offset="0.0000" stop-color="#1fc85c"/><stop offset="0.0043" stop-color="#1fc85c"/><stop offset="0.0087" stop-color="#1fc85c"/><stop offset="0.0190" stop-color="#1eca5c"/><stop offset="0.1498" stop-color="#20d120"/><stop offset="0.2846" stop-color="#30cd10"/><stop offset="0.5761" stop-color="#97d400"/><stop offset="0.7330" stop-color="#d0c400"/><stop offset="0.9540" stop-color="#d8c800"/><stop offset="0.9672" stop-color="#d8c800"/><stop offset="0.9805" stop-color="#d8c800"/><stop offset="1.0000" stop-color="#d8c800"/></linearGradient><linearGradient id="sg43" gradientUnits="userSpaceOnUse" x1="0" y1="728.7" x2="0" y2="964.4"><stop offset="0.0000" stop-color="#1dca65"/><stop offset="0.0042" stop-color="#1dca65"/><stop offset="0.0085" stop-color="#1dca65"/><stop offset="0.0231" stop-color="#19d067"/><stop offset="0.1531" stop-color="#1ed322"/><stop offset="0.2980" stop-color="#30ce0e"/><stop offset="0.5751" stop-color="#95d300"/><stop offset="0.7314" stop-color="#d0c500"/><stop offset="0.9479" stop-color="#d8c800"/><stop offset="0.9615" stop-color="#d8c800"/><stop offset="0.9751" stop-color="#d8c800"/><stop offset="1.0000" stop-color="#d8c800"/></linearGradient><linearGradient id="sg44" gradientUnits="userSpaceOnUse" x1="0" y1="723.5" x2="0" y2="963.9"><stop offset="0.0000" stop-color="#1acb6f"/><stop offset="0.0042" stop-color="#1acb6f"/><stop offset="0.0083" stop-color="#1acb6f"/><stop offset="0.0271" stop-color="#15d672"/><stop offset="0.1563" stop-color="#1dd623"/><stop offset="0.3109" stop-color="#30d00d"/><stop offset="0.5743" stop-color="#92d300"/><stop offset="0.7299" stop-color="#d0c500"/><stop offset="0.9420" stop-color="#d8c800"/><stop offset="0.9560" stop-color="#d8c800"/><stop offset="0.9699" stop-color="#d8c800"/><stop offset="1.0000" stop-color="#d8c800"/></linearGradient><linearGradient id="sg45" gradientUnits="userSpaceOnUse" x1="0" y1="718.2" x2="0" y2="963.5"><stop offset="0.0000" stop-color="#18cc79"/><stop offset="0.0041" stop-color="#18cc79"/><stop offset="0.0082" stop-color="#18cc79"/><stop offset="0.0308" stop-color="#10dc7d"/><stop offset="0.1594" stop-color="#1cd824"/><stop offset="0.3232" stop-color="#30d20c"/><stop offset="0.5734" stop-color="#90d200"/><stop offset="0.7285" stop-color="#d0c600"/><stop offset="0.9364" stop-color="#d8c800"/><stop offset="0.9507" stop-color="#d8c800"/><stop offset="0.9650" stop-color="#d8c800"/><stop offset="1.0000" stop-color="#d8c800"/></linearGradient><linearGradient id="sg46" gradientUnits="userSpaceOnUse" x1="0" y1="712.9" x2="0" y2="963.0"><stop offset="0.0000" stop-color="#15cd82"/><stop offset="0.0040" stop-color="#15cd82"/><stop offset="0.0080" stop-color="#15cd82"/><stop offset="0.0345" stop-color="#0be288"/><stop offset="0.1623" stop-color="#1bdb25"/><stop offset="0.3351" stop-color="#30d40b"/><stop offset="0.5726" stop-color="#8dd100"/><stop offset="0.7271" stop-color="#d0c700"/><stop offset="0.9310" stop-color="#d8c800"/><stop offset="0.9456" stop-color="#d8c800"/><stop offset="0.9602" stop-color="#d8c800"/><stop offset="1.0000" stop-color="#d8c800"/></linearGradient><linearGradient id="sg47" gradientUnits="userSpaceOnUse" x1="0" y1="707.6" x2="0" y2="962.6"><stop offset="0.0000" stop-color="#13ce8c"/><stop offset="0.0039" stop-color="#13ce8c"/><stop offset="0.0078" stop-color="#13ce8c"/><stop offset="0.0380" stop-color="#06e892"/><stop offset="0.1652" stop-color="#1add26"/><stop offset="0.3465" stop-color="#30d60a"/><stop offset="0.5718" stop-color="#8bd100"/><stop offset="0.7257" stop-color="#d0c700"/><stop offset="0.9258" stop-color="#d8c800"/><stop offset="0.9407" stop-color="#d8c800"/><stop offset="0.9557" stop-color="#d8c800"/><stop offset="1.0000" stop-color="#d8c800"/></linearGradient><linearGradient id="sg48" gradientUnits="userSpaceOnUse" x1="0" y1="702.3" x2="0" y2="962.1"><stop offset="0.0000" stop-color="#11d096"/><stop offset="0.0038" stop-color="#11d096"/><stop offset="0.0077" stop-color="#11d096"/><stop offset="0.0413" stop-color="#01ee9d"/><stop offset="0.1679" stop-color="#18df28"/><stop offset="0.3575" stop-color="#30d808"/><stop offset="0.5711" stop-color="#89d000"/><stop offset="0.7245" stop-color="#d0c800"/><stop offset="0.9208" stop-color="#d8c800"/><stop offset="0.9360" stop-color="#d8c800"/><stop offset="0.9513" stop-color="#d8c800"/><stop offset="1.0000" stop-color="#d8c800"/></linearGradient><linearGradient id="sg49" gradientUnits="userSpaceOnUse" x1="0" y1="699.1" x2="0" y2="961.9"><stop offset="0.0000" stop-color="#10cf9c"/><stop offset="0.0038" stop-color="#10cf9c"/><stop offset="0.0076" stop-color="#10d09e"/><stop offset="0.0452" stop-color="#00f0a0"/><stop offset="0.1747" stop-color="#18e028"/><stop offset="0.3678" stop-color="#30d808"/><stop offset="0.5754" stop-color="#88d000"/><stop offset="0.7254" stop-color="#d0c800"/><stop offset="0.9145" stop-color="#d8c800"/><stop offset="0.9331" stop-color="#d8c800"/><stop offset="0.9494" stop-color="#d8c800"/><stop offset="1.0000" stop-color="#d8c800"/></linearGradient><linearGradient id="sg50" gradientUnits="userSpaceOnUse" x1="0" y1="696.6" x2="0" y2="961.7"><stop offset="0.0000" stop-color="#10cda0"/><stop offset="0.0038" stop-color="#10cda0"/><stop offset="0.0075" stop-color="#10d0a6"/><stop offset="0.0492" stop-color="#00f0a0"/><stop offset="0.1827" stop-color="#18e028"/><stop offset="0.3778" stop-color="#30d808"/><stop offset="0.5814" stop-color="#88d000"/><stop offset="0.7271" stop-color="#d0c800"/><stop offset="0.9079" stop-color="#d8c800"/><stop offset="0.9307" stop-color="#d8c800"/><stop offset="0.9484" stop-color="#d8c800"/><stop offset="1.0000" stop-color="#d8c800"/></linearGradient><linearGradient id="sg51" gradientUnits="userSpaceOnUse" x1="0" y1="694.0" x2="0" y2="961.5"><stop offset="0.0000" stop-color="#10cca5"/><stop offset="0.0037" stop-color="#10cca5"/><stop offset="0.0075" stop-color="#10d0ad"/><stop offset="0.0532" stop-color="#00f0a0"/><stop offset="0.1906" stop-color="#18e028"/><stop offset="0.3876" stop-color="#30d808"/><stop offset="0.5872" stop-color="#88d000"/><stop offset="0.7288" stop-color="#d0c800"/><stop offset="0.9014" stop-color="#d8c800"/><stop offset="0.9284" stop-color="#d8c800"/><stop offset="0.9474" stop-color="#d8c800"/><stop offset="1.0000" stop-color="#d8c800"/></linearGradient><linearGradient id="sg52" gradientUnits="userSpaceOnUse" x1="0" y1="691.5" x2="0" y2="961.3"><stop offset="0.0000" stop-color="#10caaa"/><stop offset="0.0037" stop-color="#10caaa"/><stop offset="0.0074" stop-color="#10d0b5"/><stop offset="0.0570" stop-color="#00f0a0"/><stop offset="0.1984" stop-color="#18e028"/><stop offset="0.3973" stop-color="#30d808"/><stop offset="0.5930" stop-color="#88d000"/><stop offset="0.7304" stop-color="#d0c800"/><stop offset="0.8950" stop-color="#d8c800"/><stop offset="0.9261" stop-color="#d8c800"/><stop offset="0.9464" stop-color="#d8c800"/><stop offset="1.0000" stop-color="#d8c800"/></linearGradient><linearGradient id="sg53" gradientUnits="userSpaceOnUse" x1="0" y1="689.0" x2="0" y2="961.1"><stop offset="0.0000" stop-color="#10c9ae"/><stop offset="0.0037" stop-color="#10c9ae"/><stop offset="0.0073" stop-color="#10d0bd"/><stop offset="0.0609" stop-color="#00f0a0"/><stop offset="0.2060" stop-color="#18e028"/><stop offset="0.4067" stop-color="#30d808"/><stop offset="0.5986" stop-color="#88d000"/><stop offset="0.7320" stop-color="#d0c800"/><stop offset="0.8888" stop-color="#d8c800"/><stop offset="0.9239" stop-color="#d8c800"/><stop offset="0.9454" stop-color="#d8c800"/><stop offset="1.0000" stop-color="#d8c800"/></linearGradient><linearGradient id="sg54" gradientUnits="userSpaceOnUse" x1="0" y1="686.0" x2="0" y2="960.9"><stop offset="0.0000" stop-color="#10c7b2"/><stop offset="0.0038" stop-color="#10c7b2"/><stop offset="0.0095" stop-color="#10d0c2"/><stop offset="0.0666" stop-color="#00f0a0"/><stop offset="0.2146" stop-color="#18e027"/><stop offset="0.4188" stop-color="#30d808"/><stop offset="0.6035" stop-color="#89d100"/><stop offset="0.7312" stop-color="#d0c800"/><stop offset="0.8851" stop-color="#d8c800"/><stop offset="0.9225" stop-color="#d8c800"/><stop offset="0.9449" stop-color="#d8c800"/><stop offset="1.0000" stop-color="#d8c800"/></linearGradient><linearGradient id="sg55" gradientUnits="userSpaceOnUse" x1="0" y1="682.9" x2="0" y2="960.7"><stop offset="0.0000" stop-color="#10c5b5"/><stop offset="0.0041" stop-color="#10c6b6"/><stop offset="0.0130" stop-color="#0fd1c6"/><stop offset="0.0734" stop-color="#00f0a0"/><stop offset="0.2236" stop-color="#19e125"/><stop offset="0.4323" stop-color="#31d909"/><stop offset="0.6077" stop-color="#8ad200"/><stop offset="0.7290" stop-color="#d1c900"/><stop offset="0.8831" stop-color="#d8c800"/><stop offset="0.9215" stop-color="#d8c800"/><stop offset="0.9446" stop-color="#d8c800"/><stop offset="1.0000" stop-color="#d8c800"/></linearGradient><linearGradient id="sg56" gradientUnits="userSpaceOnUse" x1="0" y1="679.7" x2="0" y2="960.6"><stop offset="0.0000" stop-color="#10c4b9"/><stop offset="0.0043" stop-color="#10c5ba"/><stop offset="0.0165" stop-color="#0ed1ca"/><stop offset="0.0800" stop-color="#00f0a0"/><stop offset="0.2325" stop-color="#1ae224"/><stop offset="0.4455" stop-color="#31da0a"/><stop offset="0.6119" stop-color="#8cd400"/><stop offset="0.7269" stop-color="#d2c900"/><stop offset="0.8811" stop-color="#d8c800"/><stop offset="0.9206" stop-color="#d8c800"/><stop offset="0.9443" stop-color="#d8c800"/><stop offset="1.0000" stop-color="#d8c800"/></linearGradient><linearGradient id="sg57" gradientUnits="userSpaceOnUse" x1="0" y1="676.5" x2="0" y2="960.4"><stop offset="0.0000" stop-color="#10c2bc"/><stop offset="0.0046" stop-color="#10c4be"/><stop offset="0.0198" stop-color="#0ed1ce"/><stop offset="0.0865" stop-color="#00f0a0"/><stop offset="0.2412" stop-color="#1ae222"/><stop offset="0.4584" stop-color="#31da0a"/><stop offset="0.6160" stop-color="#8dd500"/><stop offset="0.7248" stop-color="#d2c900"/><stop offset="0.8791" stop-color="#d8c800"/><stop offset="0.9196" stop-color="#d8c800"/><stop offset="0.9440" stop-color="#d8c800"/><stop offset="1.0000" stop-color="#d8c800"/></linearGradient><linearGradient id="sg58" gradientUnits="userSpaceOnUse" x1="0" y1="673.4" x2="0" y2="960.2"><stop offset="0.0000" stop-color="#10c0bf"/><stop offset="0.0048" stop-color="#10c3c2"/><stop offset="0.0231" stop-color="#0dd2d2"/><stop offset="0.0928" stop-color="#00f0a0"/><stop offset="0.2497" stop-color="#1be320"/><stop offset="0.4710" stop-color="#32db0b"/><stop offset="0.6200" stop-color="#8ed600"/><stop offset="0.7227" stop-color="#d3ca00"/><stop offset="0.8772" stop-color="#d8c800"/><stop offset="0.9187" stop-color="#d8c800"/><stop offset="0.9437" stop-color="#d8c800"/><stop offset="1.0000" stop-color="#d8c800"/></linearGradient><linearGradient id="sg59" gradientUnits="userSpaceOnUse" x1="0" y1="670.2" x2="0" y2="960.1"><stop offset="0.0000" stop-color="#10bfc3"/><stop offset="0.0051" stop-color="#10c2c6"/><stop offset="0.0263" stop-color="#0cd2d6"/><stop offset="0.0991" stop-color="#00f0a0"/><stop offset="0.2581" stop-color="#1ce41f"/><stop offset="0.4834" stop-color="#32dc0c"/><stop offset="0.6240" stop-color="#90d800"/><stop offset="0.7207" stop-color="#d4ca00"/><stop offset="0.8753" stop-color="#d8c800"/><stop offset="0.9179" stop-color="#d8c800"/><stop offset="0.9434" stop-color="#d8c800"/><stop offset="1.0000" stop-color="#d8c800"/></linearGradient><linearGradient id="sg60" gradientUnits="userSpaceOnUse" x1="0" y1="667.0" x2="0" y2="959.9"><stop offset="0.0000" stop-color="#10bdc6"/><stop offset="0.0053" stop-color="#10c1ca"/><stop offset="0.0294" stop-color="#0cd2da"/><stop offset="0.1052" stop-color="#00f0a0"/><stop offset="0.2663" stop-color="#1ce41d"/><stop offset="0.4955" stop-color="#32dc0c"/><stop offset="0.6278" stop-color="#91d900"/><stop offset="0.7187" stop-color="#d4ca00"/><stop offset="0.8734" stop-color="#d8c800"/><stop offset="0.9170" stop-color="#d8c800"/><stop offset="0.9431" stop-color="#d8c800"/><stop offset="1.0000" stop-color="#d8c800"/></linearGradient><linearGradient id="sg61" gradientUnits="userSpaceOnUse" x1="0" y1="663.9" x2="0" y2="959.7"><stop offset="0.0000" stop-color="#10bbc9"/><stop offset="0.0055" stop-color="#10c0ce"/><stop offset="0.0325" stop-color="#0bd3de"/><stop offset="0.1111" stop-color="#00f0a0"/><stop offset="0.2743" stop-color="#1de51b"/><stop offset="0.5074" stop-color="#33dd0d"/><stop offset="0.6316" stop-color="#92da00"/><stop offset="0.7168" stop-color="#d5cb00"/><stop offset="0.8716" stop-color="#d8c800"/><stop offset="0.9161" stop-color="#d8c800"/><stop offset="0.9429" stop-color="#d8c800"/><stop offset="1.0000" stop-color="#d8c800"/></linearGradient><linearGradient id="sg62" gradientUnits="userSpaceOnUse" x1="0" y1="660.7" x2="0" y2="959.6"><stop offset="0.0000" stop-color="#10bacd"/><stop offset="0.0058" stop-color="#10bfd2"/><stop offset="0.0355" stop-color="#0ad3e2"/><stop offset="0.1170" stop-color="#00f0a0"/><stop offset="0.2821" stop-color="#1ee61a"/><stop offset="0.5190" stop-color="#33de0e"/><stop offset="0.6353" stop-color="#94dc00"/><stop offset="0.7149" stop-color="#d6cb00"/><stop offset="0.8698" stop-color="#d8c800"/><stop offset="0.9153" stop-color="#d8c800"/><stop offset="0.9426" stop-color="#d8c800"/><stop offset="1.0000" stop-color="#d8c800"/></linearGradient><linearGradient id="sg63" gradientUnits="userSpaceOnUse" x1="0" y1="657.5" x2="0" y2="959.4"><stop offset="0.0000" stop-color="#10b8d0"/><stop offset="0.0060" stop-color="#10bed6"/><stop offset="0.0385" stop-color="#0ad3e6"/><stop offset="0.1227" stop-color="#00f0a0"/><stop offset="0.2898" stop-color="#1ee618"/><stop offset="0.5304" stop-color="#33de0e"/><stop offset="0.6389" stop-color="#95dd00"/><stop offset="0.7130" stop-color="#d6cb00"/><stop offset="0.8681" stop-color="#d8c800"/><stop offset="0.9145" stop-color="#d8c800"/><stop offset="0.9423" stop-color="#d8c800"/><stop offset="1.0000" stop-color="#d8c800"/></linearGradient><linearGradient id="sg64" gradientUnits="userSpaceOnUse" x1="0" y1="654.4" x2="0" y2="959.2"><stop offset="0.0000" stop-color="#10b6d3"/><stop offset="0.0062" stop-color="#10bdda"/><stop offset="0.0414" stop-color="#09d4ea"/><stop offset="0.1284" stop-color="#00f0a0"/><stop offset="0.2973" stop-color="#1fe716"/><stop offset="0.5416" stop-color="#34df0f"/><stop offset="0.6425" stop-color="#96de00"/><stop offset="0.7112" stop-color="#d7cc00"/><stop offset="0.8664" stop-color="#d8c800"/><stop offset="0.9137" stop-color="#d8c800"/><stop offset="0.9421" stop-color="#d8c800"/><stop offset="1.0000" stop-color="#d8c800"/></linearGradient><linearGradient id="sg65" gradientUnits="userSpaceOnUse" x1="0" y1="651.2" x2="0" y2="959.1"><stop offset="0.0000" stop-color="#10b5d7"/><stop offset="0.0064" stop-color="#10bcde"/><stop offset="0.0443" stop-color="#08d4ee"/><stop offset="0.1339" stop-color="#00f0a0"/><stop offset="0.3047" stop-color="#20e815"/><stop offset="0.5526" stop-color="#34e010"/><stop offset="0.6460" stop-color="#98e000"/><stop offset="0.7094" stop-color="#d8cc00"/><stop offset="0.8647" stop-color="#d8c800"/><stop offset="0.9129" stop-color="#d8c800"/><stop offset="0.9418" stop-color="#d8c800"/><stop offset="1.0000" stop-color="#d8c800"/></linearGradient><linearGradient id="sg66" gradientUnits="userSpaceOnUse" x1="0" y1="649.0" x2="0" y2="958.6"><stop offset="0.0000" stop-color="#10b1d7"/><stop offset="0.0066" stop-color="#10b9de"/><stop offset="0.0480" stop-color="#08d4f1"/><stop offset="0.1407" stop-color="#00f0a0"/><stop offset="0.3119" stop-color="#20e814"/><stop offset="0.5458" stop-color="#34e010"/><stop offset="0.6369" stop-color="#98e000"/><stop offset="0.7051" stop-color="#d8cc00"/><stop offset="0.8617" stop-color="#d8c800"/><stop offset="0.9102" stop-color="#d8c800"/><stop offset="0.9402" stop-color="#d8c800"/><stop offset="1.0000" stop-color="#d8c800"/></linearGradient><linearGradient id="sg67" gradientUnits="userSpaceOnUse" x1="0" y1="647.5" x2="0" y2="958.0"><stop offset="0.0000" stop-color="#11add5"/><stop offset="0.0069" stop-color="#11b5dc"/><stop offset="0.0522" stop-color="#07d4f2"/><stop offset="0.1483" stop-color="#00f0a0"/><stop offset="0.3190" stop-color="#20e814"/><stop offset="0.5285" stop-color="#34e010"/><stop offset="0.6204" stop-color="#98e000"/><stop offset="0.6992" stop-color="#d8cc00"/><stop offset="0.8580" stop-color="#d8c800"/><stop offset="0.9063" stop-color="#d8c800"/><stop offset="0.9378" stop-color="#d8c800"/><stop offset="1.0000" stop-color="#d8c800"/></linearGradient><linearGradient id="sg68" gradientUnits="userSpaceOnUse" x1="0" y1="646.0" x2="0" y2="957.3"><stop offset="0.0000" stop-color="#12a8d3"/><stop offset="0.0071" stop-color="#12b0d9"/><stop offset="0.0564" stop-color="#06d4f3"/><stop offset="0.1558" stop-color="#00f0a0"/><stop offset="0.3261" stop-color="#20e814"/><stop offset="0.5114" stop-color="#34e010"/><stop offset="0.6040" stop-color="#98e000"/><stop offset="0.6934" stop-color="#d8cc00"/><stop offset="0.8543" stop-color="#d8c800"/><stop offset="0.9025" stop-color="#d8c800"/><stop offset="0.9354" stop-color="#d8c800"/><stop offset="1.0000" stop-color="#d8c800"/></linearGradient><linearGradient id="sg69" gradientUnits="userSpaceOnUse" x1="0" y1="644.5" x2="0" y2="956.7"><stop offset="0.0000" stop-color="#12a4d1"/><stop offset="0.0073" stop-color="#12acd7"/><stop offset="0.0606" stop-color="#06d4f5"/><stop offset="0.1633" stop-color="#00f0a0"/><stop offset="0.3331" stop-color="#20e814"/><stop offset="0.4943" stop-color="#34e010"/><stop offset="0.5877" stop-color="#98e000"/><stop offset="0.6876" stop-color="#d8cc00"/><stop offset="0.8506" stop-color="#d8c800"/><stop offset="0.8987" stop-color="#d8c800"/><stop offset="0.9331" stop-color="#d8c800"/><stop offset="1.0000" stop-color="#d8c800"/></linearGradient><linearGradient id="sg70" gradientUnits="userSpaceOnUse" x1="0" y1="643.0" x2="0" y2="956.0"><stop offset="0.0000" stop-color="#139fcf"/><stop offset="0.0076" stop-color="#13a7d4"/><stop offset="0.0648" stop-color="#05d4f6"/><stop offset="0.1708" stop-color="#00f0a0"/><stop offset="0.3401" stop-color="#20e814"/><stop offset="0.4773" stop-color="#34e010"/><stop offset="0.5715" stop-color="#98e000"/><stop offset="0.6818" stop-color="#d8cc00"/><stop offset="0.8469" stop-color="#d8c800"/><stop offset="0.8948" stop-color="#d8c800"/><stop offset="0.9307" stop-color="#d8c800"/><stop offset="1.0000" stop-color="#d8c800"/></linearGradient><linearGradient id="sg71" gradientUnits="userSpaceOnUse" x1="0" y1="641.5" x2="0" y2="955.4"><stop offset="0.0000" stop-color="#149bcd"/><stop offset="0.0078" stop-color="#14a3d2"/><stop offset="0.0690" stop-color="#04d4f7"/><stop offset="0.1782" stop-color="#00f0a0"/><stop offset="0.3470" stop-color="#20e814"/><stop offset="0.4604" stop-color="#34e010"/><stop offset="0.5553" stop-color="#98e000"/><stop offset="0.6761" stop-color="#d8cc00"/><stop offset="0.8433" stop-color="#d8c800"/><stop offset="0.8911" stop-color="#d8c800"/><stop offset="0.9283" stop-color="#d8c800"/><stop offset="1.0000" stop-color="#d8c800"/></linearGradient><linearGradient id="sg72" gradientUnits="userSpaceOnUse" x1="0" y1="639.9" x2="0" y2="954.8"><stop offset="0.0000" stop-color="#1497cc"/><stop offset="0.0080" stop-color="#149fd0"/><stop offset="0.0731" stop-color="#04d4f8"/><stop offset="0.1856" stop-color="#00f0a0"/><stop offset="0.3539" stop-color="#20e814"/><stop offset="0.4528" stop-color="#34e010"/><stop offset="0.5458" stop-color="#98e000"/><stop offset="0.6744" stop-color="#d8cc00"/><stop offset="0.8397" stop-color="#d8c800"/><stop offset="0.8873" stop-color="#d8c800"/><stop offset="0.9262" stop-color="#d8c800"/><stop offset="1.0000" stop-color="#d8c800"/></linearGradient><linearGradient id="sg73" gradientUnits="userSpaceOnUse" x1="0" y1="638.4" x2="0" y2="954.1"><stop offset="0.0000" stop-color="#1394cb"/><stop offset="0.0083" stop-color="#139cd0"/><stop offset="0.0772" stop-color="#03d4f9"/><stop offset="0.1929" stop-color="#00f0a0"/><stop offset="0.3608" stop-color="#20e814"/><stop offset="0.4604" stop-color="#34e010"/><stop offset="0.5471" stop-color="#98e000"/><stop offset="0.6793" stop-color="#d8cc00"/><stop offset="0.8361" stop-color="#d8c800"/><stop offset="0.8836" stop-color="#d8c800"/><stop offset="0.9244" stop-color="#d8c800"/><stop offset="1.0000" stop-color="#d8c800"/></linearGradient><linearGradient id="sg74" gradientUnits="userSpaceOnUse" x1="0" y1="636.9" x2="0" y2="953.5"><stop offset="0.0000" stop-color="#1292ca"/><stop offset="0.0085" stop-color="#129ad0"/><stop offset="0.0813" stop-color="#02d4fa"/><stop offset="0.2002" stop-color="#00f0a0"/><stop offset="0.3676" stop-color="#20e814"/><stop offset="0.4680" stop-color="#34e010"/><stop offset="0.5483" stop-color="#98e000"/><stop offset="0.6843" stop-color="#d8cc00"/><stop offset="0.8325" stop-color="#d8c800"/><stop offset="0.8798" stop-color="#d8c800"/><stop offset="0.9225" stop-color="#d8c800"/><stop offset="1.0000" stop-color="#d8c800"/></linearGradient><linearGradient id="sg75" gradientUnits="userSpaceOnUse" x1="0" y1="635.4" x2="0" y2="952.8"><stop offset="0.0000" stop-color="#128fca"/><stop offset="0.0087" stop-color="#1297d0"/><stop offset="0.0853" stop-color="#02d4fa"/><stop offset="0.2075" stop-color="#00f0a0"/><stop offset="0.3744" stop-color="#20e814"/><stop offset="0.4755" stop-color="#34e010"/><stop offset="0.5496" stop-color="#98e000"/><stop offset="0.6892" stop-color="#d8cc00"/><stop offset="0.8289" stop-color="#d8c800"/><stop offset="0.8761" stop-color="#d8c800"/><stop offset="0.9207" stop-color="#d8c800"/><stop offset="1.0000" stop-color="#d8c800"/></linearGradient><linearGradient id="sg76" gradientUnits="userSpaceOnUse" x1="0" y1="633.9" x2="0" y2="952.2"><stop offset="0.0000" stop-color="#118dc9"/><stop offset="0.0090" stop-color="#1195d0"/><stop offset="0.0894" stop-color="#01d4fb"/><stop offset="0.2147" stop-color="#00f0a0"/><stop offset="0.3812" stop-color="#20e814"/><stop offset="0.4830" stop-color="#34e010"/><stop offset="0.5508" stop-color="#98e000"/><stop offset="0.6940" stop-color="#d8cc00"/><stop offset="0.8253" stop-color="#d8c800"/><stop offset="0.8725" stop-color="#d8c800"/><stop offset="0.9190" stop-color="#d8c800"/><stop offset="1.0000" stop-color="#d8c800"/></linearGradient><linearGradient id="sg77" gradientUnits="userSpaceOnUse" x1="0" y1="632.3" x2="0" y2="951.6"><stop offset="0.0000" stop-color="#118ac9"/><stop offset="0.0092" stop-color="#1192d0"/><stop offset="0.0934" stop-color="#01d4fb"/><stop offset="0.2219" stop-color="#00f0a0"/><stop offset="0.3879" stop-color="#20e814"/><stop offset="0.4904" stop-color="#34e010"/><stop offset="0.5520" stop-color="#98e000"/><stop offset="0.6989" stop-color="#d8cc00"/><stop offset="0.8218" stop-color="#d8c800"/><stop offset="0.8688" stop-color="#d8c800"/><stop offset="0.9172" stop-color="#d8c800"/><stop offset="1.0000" stop-color="#d8c800"/></linearGradient><linearGradient id="sg78" gradientUnits="userSpaceOnUse" x1="0" y1="630.5" x2="0" y2="950.9"><stop offset="0.0000" stop-color="#1087c8"/><stop offset="0.0094" stop-color="#108fd0"/><stop offset="0.0970" stop-color="#00d4fc"/><stop offset="0.2291" stop-color="#00f0a0"/><stop offset="0.3946" stop-color="#20e814"/><stop offset="0.4977" stop-color="#34e010"/><stop offset="0.5541" stop-color="#98e000"/><stop offset="0.7035" stop-color="#d8cc00"/><stop offset="0.8188" stop-color="#d8c800"/><stop offset="0.8657" stop-color="#d8c800"/><stop offset="0.9153" stop-color="#d8c800"/><stop offset="1.0000" stop-color="#d8c800"/></linearGradient><linearGradient id="sg79" gradientUnits="userSpaceOnUse" x1="0" y1="626.1" x2="0" y2="949.8"><stop offset="0.0000" stop-color="#1082cb"/><stop offset="0.0099" stop-color="#108bd4"/><stop offset="0.0976" stop-color="#00d4fc"/><stop offset="0.2364" stop-color="#00f0a0"/><stop offset="0.4013" stop-color="#20e814"/><stop offset="0.5039" stop-color="#34e010"/><stop offset="0.5619" stop-color="#98e000"/><stop offset="0.7065" stop-color="#d8cc00"/><stop offset="0.8196" stop-color="#d8c800"/><stop offset="0.8660" stop-color="#d8c800"/><stop offset="0.9130" stop-color="#d8c800"/><stop offset="1.0000" stop-color="#d8c800"/></linearGradient><linearGradient id="sg80" gradientUnits="userSpaceOnUse" x1="0" y1="621.8" x2="0" y2="948.8"><stop offset="0.0000" stop-color="#107cce"/><stop offset="0.0103" stop-color="#1087d7"/><stop offset="0.0982" stop-color="#00d4fc"/><stop offset="0.2436" stop-color="#00f0a0"/><stop offset="0.4079" stop-color="#20e814"/><stop offset="0.5099" stop-color="#34e010"/><stop offset="0.5695" stop-color="#98e000"/><stop offset="0.7095" stop-color="#d8cc00"/><stop offset="0.8204" stop-color="#d8c800"/><stop offset="0.8663" stop-color="#d8c800"/><stop offset="0.9107" stop-color="#d8c800"/><stop offset="1.0000" stop-color="#d8c800"/></linearGradient><linearGradient id="sg81" gradientUnits="userSpaceOnUse" x1="0" y1="617.4" x2="0" y2="947.7"><stop offset="0.0000" stop-color="#1077d1"/><stop offset="0.0107" stop-color="#1083db"/><stop offset="0.0988" stop-color="#00d4fc"/><stop offset="0.2506" stop-color="#00f0a0"/><stop offset="0.4143" stop-color="#20e814"/><stop offset="0.5159" stop-color="#34e010"/><stop offset="0.5770" stop-color="#98e000"/><stop offset="0.7124" stop-color="#d8cc00"/><stop offset="0.8211" stop-color="#d8c800"/><stop offset="0.8665" stop-color="#d8c800"/><stop offset="0.9084" stop-color="#d8c800"/><stop offset="1.0000" stop-color="#d8c800"/></linearGradient><linearGradient id="sg82" gradientUnits="userSpaceOnUse" x1="0" y1="613.1" x2="0" y2="946.7"><stop offset="0.0000" stop-color="#1071d3"/><stop offset="0.0111" stop-color="#107fde"/><stop offset="0.0994" stop-color="#00d4fc"/><stop offset="0.2575" stop-color="#00f0a0"/><stop offset="0.4207" stop-color="#20e814"/><stop offset="0.5217" stop-color="#34e010"/><stop offset="0.5843" stop-color="#98e000"/><stop offset="0.7153" stop-color="#d8cc00"/><stop offset="0.8219" stop-color="#d8c800"/><stop offset="0.8668" stop-color="#d8c800"/><stop offset="0.9062" stop-color="#d8c800"/><stop offset="1.0000" stop-color="#d8c800"/></linearGradient><linearGradient id="sg83" gradientUnits="userSpaceOnUse" x1="0" y1="608.7" x2="0" y2="945.7"><stop offset="0.0000" stop-color="#106bd6"/><stop offset="0.0115" stop-color="#107be2"/><stop offset="0.0999" stop-color="#00d4fc"/><stop offset="0.2643" stop-color="#00f0a0"/><stop offset="0.4269" stop-color="#20e814"/><stop offset="0.5275" stop-color="#34e010"/><stop offset="0.5915" stop-color="#98e000"/><stop offset="0.7180" stop-color="#d8cc00"/><stop offset="0.8226" stop-color="#d8c800"/><stop offset="0.8671" stop-color="#d8c800"/><stop offset="0.9040" stop-color="#d8c800"/><stop offset="1.0000" stop-color="#d8c800"/></linearGradient><linearGradient id="sg84" gradientUnits="userSpaceOnUse" x1="0" y1="605.5" x2="0" y2="944.6"><stop offset="0.0000" stop-color="#1067d9"/><stop offset="0.0118" stop-color="#1077e4"/><stop offset="0.1001" stop-color="#00d4fc"/><stop offset="0.2684" stop-color="#00f0a0"/><stop offset="0.4312" stop-color="#20e814"/><stop offset="0.5315" stop-color="#34e010"/><stop offset="0.5973" stop-color="#98e000"/><stop offset="0.7203" stop-color="#d8cc00"/><stop offset="0.8222" stop-color="#d8c800"/><stop offset="0.8671" stop-color="#d8c800"/><stop offset="0.9025" stop-color="#d8c800"/><stop offset="1.0000" stop-color="#d8c800"/></linearGradient><linearGradient id="sg85" gradientUnits="userSpaceOnUse" x1="0" y1="604.1" x2="0" y2="943.4"><stop offset="0.0000" stop-color="#1064da"/><stop offset="0.0118" stop-color="#1074e5"/><stop offset="0.0994" stop-color="#00d4fc"/><stop offset="0.2682" stop-color="#00f0a0"/><stop offset="0.4327" stop-color="#20e814"/><stop offset="0.5329" stop-color="#34e010"/><stop offset="0.6009" stop-color="#98e000"/><stop offset="0.7216" stop-color="#d8cc00"/><stop offset="0.8200" stop-color="#d8c800"/><stop offset="0.8666" stop-color="#d8c800"/><stop offset="0.9019" stop-color="#d8c800"/><stop offset="1.0000" stop-color="#d8c800"/></linearGradient><linearGradient id="sg86" gradientUnits="userSpaceOnUse" x1="0" y1="602.8" x2="0" y2="942.2"><stop offset="0.0000" stop-color="#1061dc"/><stop offset="0.0118" stop-color="#1071e6"/><stop offset="0.0988" stop-color="#00d4fc"/><stop offset="0.2681" stop-color="#00f0a0"/><stop offset="0.4342" stop-color="#20e814"/><stop offset="0.5343" stop-color="#34e010"/><stop offset="0.6046" stop-color="#98e000"/><stop offset="0.7229" stop-color="#d8cc00"/><stop offset="0.8178" stop-color="#d8c800"/><stop offset="0.8661" stop-color="#d8c800"/><stop offset="0.9014" stop-color="#d8c800"/><stop offset="1.0000" stop-color="#d8c800"/></linearGradient><linearGradient id="sg87" gradientUnits="userSpaceOnUse" x1="0" y1="601.4" x2="0" y2="941.0"><stop offset="0.0000" stop-color="#105ddd"/><stop offset="0.0118" stop-color="#106de7"/><stop offset="0.0982" stop-color="#00d4fc"/><stop offset="0.2679" stop-color="#00f0a0"/><stop offset="0.4357" stop-color="#20e814"/><stop offset="0.5358" stop-color="#34e010"/><stop offset="0.6083" stop-color="#98e000"/><stop offset="0.7242" stop-color="#d8cc00"/><stop offset="0.8156" stop-color="#d8c800"/><stop offset="0.8656" stop-color="#d8c800"/><stop offset="0.9009" stop-color="#d8c800"/><stop offset="1.0000" stop-color="#d8c800"/></linearGradient><linearGradient id="sg88" gradientUnits="userSpaceOnUse" x1="0" y1="600.0" x2="0" y2="939.9"><stop offset="0.0000" stop-color="#105adf"/><stop offset="0.0118" stop-color="#106ae7"/><stop offset="0.0975" stop-color="#00d4fc"/><stop offset="0.2678" stop-color="#00f0a0"/><stop offset="0.4371" stop-color="#20e814"/><stop offset="0.5372" stop-color="#34e010"/><stop offset="0.6120" stop-color="#98e000"/><stop offset="0.7255" stop-color="#d8cc00"/><stop offset="0.8134" stop-color="#d8c800"/><stop offset="0.8651" stop-color="#d8c800"/><stop offset="0.9004" stop-color="#d8c800"/><stop offset="1.0000" stop-color="#d8c800"/></linearGradient><linearGradient id="sg89" gradientUnits="userSpaceOnUse" x1="0" y1="598.5" x2="0" y2="938.7"><stop offset="0.0000" stop-color="#1057e0"/><stop offset="0.0124" stop-color="#1068e8"/><stop offset="0.0987" stop-color="#00d4fc"/><stop offset="0.2690" stop-color="#00f0a0"/><stop offset="0.4391" stop-color="#20e814"/><stop offset="0.5391" stop-color="#34e010"/><stop offset="0.6158" stop-color="#98e000"/><stop offset="0.7276" stop-color="#d8cc00"/><stop offset="0.8120" stop-color="#d8c800"/><stop offset="0.8639" stop-color="#d8c800"/><stop offset="0.9001" stop-color="#d8c800"/><stop offset="1.0000" stop-color="#d8c800"/></linearGradient><linearGradient id="sg90" gradientUnits="userSpaceOnUse" x1="0" y1="596.3" x2="0" y2="937.6"><stop offset="0.0000" stop-color="#1054e0"/><stop offset="0.0150" stop-color="#1066e8"/><stop offset="0.1053" stop-color="#00d4fc"/><stop offset="0.2746" stop-color="#00f0a0"/><stop offset="0.4425" stop-color="#20e814"/><stop offset="0.5427" stop-color="#34e010"/><stop offset="0.6202" stop-color="#98e000"/><stop offset="0.7322" stop-color="#d8cc00"/><stop offset="0.8132" stop-color="#d8c800"/><stop offset="0.8606" stop-color="#d8c800"/><stop offset="0.9004" stop-color="#d8c800"/><stop offset="1.0000" stop-color="#d8c800"/></linearGradient><linearGradient id="sg91" gradientUnits="userSpaceOnUse" x1="0" y1="594.1" x2="0" y2="936.5"><stop offset="0.0000" stop-color="#1051e0"/><stop offset="0.0177" stop-color="#1065e8"/><stop offset="0.1119" stop-color="#00d4fc"/><stop offset="0.2801" stop-color="#00f0a0"/><stop offset="0.4458" stop-color="#20e814"/><stop offset="0.5463" stop-color="#34e010"/><stop offset="0.6246" stop-color="#98e000"/><stop offset="0.7368" stop-color="#d8cc00"/><stop offset="0.8143" stop-color="#d8c800"/><stop offset="0.8573" stop-color="#d8c800"/><stop offset="0.9007" stop-color="#d8c800"/><stop offset="1.0000" stop-color="#d8c800"/></linearGradient><linearGradient id="sg92" gradientUnits="userSpaceOnUse" x1="0" y1="591.9" x2="0" y2="935.5"><stop offset="0.0000" stop-color="#104fe0"/><stop offset="0.0202" stop-color="#1063e8"/><stop offset="0.1184" stop-color="#00d4fc"/><stop offset="0.2855" stop-color="#00f0a0"/><stop offset="0.4492" stop-color="#20e814"/><stop offset="0.5499" stop-color="#34e010"/><stop offset="0.6290" stop-color="#98e000"/><stop offset="0.7413" stop-color="#d8cc00"/><stop offset="0.8154" stop-color="#d8c800"/><stop offset="0.8541" stop-color="#d8c800"/><stop offset="0.9010" stop-color="#d8c800"/><stop offset="1.0000" stop-color="#d8c800"/></linearGradient><linearGradient id="sg93" gradientUnits="userSpaceOnUse" x1="0" y1="589.7" x2="0" y2="934.4"><stop offset="0.0000" stop-color="#104ce0"/><stop offset="0.0228" stop-color="#1062e8"/><stop offset="0.1249" stop-color="#00d4fc"/><stop offset="0.2910" stop-color="#00f0a0"/><stop offset="0.4525" stop-color="#20e814"/><stop offset="0.5534" stop-color="#34e010"/><stop offset="0.6333" stop-color="#98e000"/><stop offset="0.7458" stop-color="#d8cc00"/><stop offset="0.8165" stop-color="#d8c800"/><stop offset="0.8508" stop-color="#d8c800"/><stop offset="0.9013" stop-color="#d8c800"/><stop offset="1.0000" stop-color="#d8c800"/></linearGradient><linearGradient id="sg94" gradientUnits="userSpaceOnUse" x1="0" y1="587.5" x2="0" y2="933.3"><stop offset="0.0000" stop-color="#1049e0"/><stop offset="0.0254" stop-color="#1060e8"/><stop offset="0.1313" stop-color="#00d4fc"/><stop offset="0.2963" stop-color="#00f0a0"/><stop offset="0.4558" stop-color="#20e814"/><stop offset="0.5569" stop-color="#34e010"/><stop offset="0.6377" stop-color="#98e000"/><stop offset="0.7503" stop-color="#d8cc00"/><stop offset="0.8176" stop-color="#d8c800"/><stop offset="0.8476" stop-color="#d8c800"/><stop offset="0.9017" stop-color="#d8c800"/><stop offset="1.0000" stop-color="#d8c800"/></linearGradient><linearGradient id="sg95" gradientUnits="userSpaceOnUse" x1="0" y1="583.7" x2="0" y2="932.0"><stop offset="0.0000" stop-color="#0f44de"/><stop offset="0.0314" stop-color="#105fe8"/><stop offset="0.1415" stop-color="#00d4fc"/><stop offset="0.3052" stop-color="#00f0a0"/><stop offset="0.4615" stop-color="#20e814"/><stop offset="0.5620" stop-color="#34e010"/><stop offset="0.6440" stop-color="#98e000"/><stop offset="0.7553" stop-color="#d8cc00"/><stop offset="0.8253" stop-color="#d8c800"/><stop offset="0.8530" stop-color="#d8c800"/><stop offset="0.9033" stop-color="#d8c800"/><stop offset="1.0000" stop-color="#d8c800"/></linearGradient><linearGradient id="sg96" gradientUnits="userSpaceOnUse" x1="0" y1="579.3" x2="0" y2="930.6"><stop offset="0.0000" stop-color="#0e3edb"/><stop offset="0.0384" stop-color="#105ee8"/><stop offset="0.1528" stop-color="#00d4fc"/><stop offset="0.3150" stop-color="#00f0a0"/><stop offset="0.4678" stop-color="#20e814"/><stop offset="0.5675" stop-color="#34e010"/><stop offset="0.6509" stop-color="#98e000"/><stop offset="0.7604" stop-color="#d8cc00"/><stop offset="0.8349" stop-color="#d8c800"/><stop offset="0.8612" stop-color="#d8c800"/><stop offset="0.9055" stop-color="#d8c800"/><stop offset="1.0000" stop-color="#d8c800"/></linearGradient><linearGradient id="sg97" gradientUnits="userSpaceOnUse" x1="0" y1="575.0" x2="0" y2="929.3"><stop offset="0.0000" stop-color="#0d39d8"/><stop offset="0.0453" stop-color="#105de8"/><stop offset="0.1638" stop-color="#00d4fc"/><stop offset="0.3247" stop-color="#00f0a0"/><stop offset="0.4741" stop-color="#20e814"/><stop offset="0.5729" stop-color="#34e010"/><stop offset="0.6577" stop-color="#98e000"/><stop offset="0.7655" stop-color="#d8cc00"/><stop offset="0.8444" stop-color="#d8c800"/><stop offset="0.8692" stop-color="#d8c800"/><stop offset="0.9076" stop-color="#d8c800"/><stop offset="1.0000" stop-color="#d8c800"/></linearGradient><linearGradient id="sg98" gradientUnits="userSpaceOnUse" x1="0" y1="570.6" x2="0" y2="927.9"><stop offset="0.0000" stop-color="#0b34d5"/><stop offset="0.0521" stop-color="#105be8"/><stop offset="0.1747" stop-color="#00d4fc"/><stop offset="0.3342" stop-color="#00f0a0"/><stop offset="0.4802" stop-color="#20e814"/><stop offset="0.5781" stop-color="#34e010"/><stop offset="0.6644" stop-color="#98e000"/><stop offset="0.7704" stop-color="#d8cc00"/><stop offset="0.8538" stop-color="#d8c800"/><stop offset="0.8770" stop-color="#d8c800"/><stop offset="0.9096" stop-color="#d8c800"/><stop offset="1.0000" stop-color="#d8c800"/></linearGradient><linearGradient id="sg99" gradientUnits="userSpaceOnUse" x1="0" y1="566.2" x2="0" y2="926.5"><stop offset="0.0000" stop-color="#0a2ed2"/><stop offset="0.0588" stop-color="#105ae8"/><stop offset="0.1854" stop-color="#00d4fc"/><stop offset="0.3435" stop-color="#00f0a0"/><stop offset="0.4862" stop-color="#20e814"/><stop offset="0.5834" stop-color="#34e010"/><stop offset="0.6710" stop-color="#98e000"/><stop offset="0.7753" stop-color="#d8cc00"/><stop offset="0.8630" stop-color="#d8c800"/><stop offset="0.8848" stop-color="#d8c800"/><stop offset="0.9116" stop-color="#d8c800"/><stop offset="1.0000" stop-color="#d8c800"/></linearGradient><linearGradient id="sg100" gradientUnits="userSpaceOnUse" x1="0" y1="561.8" x2="0" y2="925.2"><stop offset="0.0000" stop-color="#0929cf"/><stop offset="0.0654" stop-color="#1059e8"/><stop offset="0.1959" stop-color="#00d4fc"/><stop offset="0.3527" stop-color="#00f0a0"/><stop offset="0.4922" stop-color="#20e814"/><stop offset="0.5885" stop-color="#34e010"/><stop offset="0.6775" stop-color="#98e000"/><stop offset="0.7800" stop-color="#d8cc00"/><stop offset="0.8720" stop-color="#d8c800"/><stop offset="0.8924" stop-color="#d8c800"/><stop offset="0.9136" stop-color="#d8c800"/><stop offset="1.0000" stop-color="#d8c800"/></linearGradient><linearGradient id="sg101" gradientUnits="userSpaceOnUse" x1="0" y1="558.1" x2="0" y2="924.0"><stop offset="0.0000" stop-color="#0824cc"/><stop offset="0.0710" stop-color="#1058e8"/><stop offset="0.2048" stop-color="#00d4fc"/><stop offset="0.3605" stop-color="#00f0a0"/><stop offset="0.4972" stop-color="#20e814"/><stop offset="0.5928" stop-color="#34e010"/><stop offset="0.6830" stop-color="#98e000"/><stop offset="0.7841" stop-color="#d8cc00"/><stop offset="0.8797" stop-color="#d8c800"/><stop offset="0.8988" stop-color="#d8c800"/><stop offset="0.9153" stop-color="#d8c800"/><stop offset="1.0000" stop-color="#d8c800"/></linearGradient><linearGradient id="sg102" gradientUnits="userSpaceOnUse" x1="0" y1="558.1" x2="0" y2="924.0"><stop offset="0.0000" stop-color="#0824cc"/><stop offset="0.0710" stop-color="#1058e8"/><stop offset="0.2048" stop-color="#00d4fc"/><stop offset="0.3605" stop-color="#00f0a0"/><stop offset="0.4972" stop-color="#20e814"/><stop offset="0.5928" stop-color="#34e010"/><stop offset="0.6830" stop-color="#98e000"/><stop offset="0.7841" stop-color="#d8cc00"/><stop offset="0.8797" stop-color="#d8c800"/><stop offset="0.8988" stop-color="#d8c800"/><stop offset="0.9153" stop-color="#d8c800"/><stop offset="1.0000" stop-color="#d8c800"/></linearGradient><linearGradient id="sg103" gradientUnits="userSpaceOnUse" x1="0" y1="558.1" x2="0" y2="924.0"><stop offset="0.0000" stop-color="#0824cc"/><stop offset="0.0710" stop-color="#1058e8"/><stop offset="0.2048" stop-color="#00d4fc"/><stop offset="0.3605" stop-color="#00f0a0"/><stop offset="0.4972" stop-color="#20e814"/><stop offset="0.5928" stop-color="#34e010"/><stop offset="0.6830" stop-color="#98e000"/><stop offset="0.7841" stop-color="#d8cc00"/><stop offset="0.8797" stop-color="#d8c800"/><stop offset="0.8988" stop-color="#d8c800"/><stop offset="0.9153" stop-color="#d8c800"/><stop offset="1.0000" stop-color="#d8c800"/></linearGradient><linearGradient id="sg104" gradientUnits="userSpaceOnUse" x1="0" y1="558.1" x2="0" y2="924.0"><stop offset="0.0000" stop-color="#0824cc"/><stop offset="0.0710" stop-color="#1058e8"/><stop offset="0.2048" stop-color="#00d4fc"/><stop offset="0.3605" stop-color="#00f0a0"/><stop offset="0.4972" stop-color="#20e814"/><stop offset="0.5928" stop-color="#34e010"/><stop offset="0.6830" stop-color="#98e000"/><stop offset="0.7841" stop-color="#d8cc00"/><stop offset="0.8797" stop-color="#d8c800"/><stop offset="0.8988" stop-color="#d8c800"/><stop offset="0.9153" stop-color="#d8c800"/><stop offset="1.0000" stop-color="#d8c800"/></linearGradient><linearGradient id="sg105" gradientUnits="userSpaceOnUse" x1="0" y1="558.1" x2="0" y2="924.0"><stop offset="0.0000" stop-color="#0824cc"/><stop offset="0.0710" stop-color="#1058e8"/><stop offset="0.2048" stop-color="#00d4fc"/><stop offset="0.3605" stop-color="#00f0a0"/><stop offset="0.4972" stop-color="#20e814"/><stop offset="0.5928" stop-color="#34e010"/><stop offset="0.6830" stop-color="#98e000"/><stop offset="0.7841" stop-color="#d8cc00"/><stop offset="0.8797" stop-color="#d8c800"/><stop offset="0.8988" stop-color="#d8c800"/><stop offset="0.9153" stop-color="#d8c800"/><stop offset="1.0000" stop-color="#d8c800"/></linearGradient></defs>
<g clip-path="url(#sclip)">
<g filter="url(#bh)"><rect x="423" y="540" width="8.6" height="440" fill="url(#sg0)"/><rect x="431" y="540" width="8.6" height="440" fill="url(#sg1)"/><rect x="439" y="540" width="8.6" height="440" fill="url(#sg2)"/><rect x="447" y="540" width="8.6" height="440" fill="url(#sg3)"/><rect x="455" y="540" width="8.6" height="440" fill="url(#sg4)"/><rect x="463" y="540" width="8.6" height="440" fill="url(#sg5)"/><rect x="471" y="540" width="8.6" height="440" fill="url(#sg6)"/><rect x="479" y="540" width="8.6" height="440" fill="url(#sg7)"/><rect x="487" y="540" width="8.6" height="440" fill="url(#sg8)"/><rect x="495" y="540" width="8.6" height="440" fill="url(#sg9)"/><rect x="503" y="540" width="8.6" height="440" fill="url(#sg10)"/><rect x="511" y="540" width="8.6" height="440" fill="url(#sg11)"/><rect x="519" y="540" width="8.6" height="440" fill="url(#sg12)"/><rect x="527" y="540" width="8.6" height="440" fill="url(#sg13)"/><rect x="535" y="540" width="8.6" height="440" fill="url(#sg14)"/><rect x="543" y="540" width="8.6" height="440" fill="url(#sg15)"/><rect x="551" y="540" width="8.6" height="440" fill="url(#sg16)"/><rect x="559" y="540" width="8.6" height="440" fill="url(#sg17)"/><rect x="567" y="540" width="8.6" height="440" fill="url(#sg18)"/><rect x="575" y="540" width="8.6" height="440" fill="url(#sg19)"/><rect x="583" y="540" width="8.6" height="440" fill="url(#sg20)"/><rect x="591" y="540" width="8.6" height="440" fill="url(#sg21)"/><rect x="599" y="540" width="8.6" height="440" fill="url(#sg22)"/><rect x="607" y="540" width="8.6" height="440" fill="url(#sg23)"/><rect x="615" y="540" width="8.6" height="440" fill="url(#sg24)"/><rect x="623" y="540" width="8.6" height="440" fill="url(#sg25)"/><rect x="631" y="540" width="8.6" height="440" fill="url(#sg26)"/><rect x="639" y="540" width="8.6" height="440" fill="url(#sg27)"/><rect x="647" y="540" width="8.6" height="440" fill="url(#sg28)"/><rect x="655" y="540" width="8.6" height="440" fill="url(#sg29)"/><rect x="663" y="540" width="8.6" height="440" fill="url(#sg30)"/><rect x="671" y="540" width="8.6" height="440" fill="url(#sg31)"/><rect x="679" y="540" width="8.6" height="440" fill="url(#sg32)"/><rect x="687" y="540" width="8.6" height="440" fill="url(#sg33)"/><rect x="695" y="540" width="8.6" height="440" fill="url(#sg34)"/><rect x="703" y="540" width="8.6" height="440" fill="url(#sg35)"/><rect x="711" y="540" width="8.6" height="440" fill="url(#sg36)"/><rect x="719" y="540" width="8.6" height="440" fill="url(#sg37)"/><rect x="727" y="540" width="8.6" height="440" fill="url(#sg38)"/><rect x="735" y="540" width="8.6" height="440" fill="url(#sg39)"/><rect x="743" y="540" width="8.6" height="440" fill="url(#sg40)"/><rect x="751" y="540" width="8.6" height="440" fill="url(#sg41)"/><rect x="759" y="540" width="8.6" height="440" fill="url(#sg42)"/><rect x="767" y="540" width="8.6" height="440" fill="url(#sg43)"/><rect x="775" y="540" width="8.6" height="440" fill="url(#sg44)"/><rect x="783" y="540" width="8.6" height="440" fill="url(#sg45)"/><rect x="791" y="540" width="8.6" height="440" fill="url(#sg46)"/><rect x="799" y="540" width="8.6" height="440" fill="url(#sg47)"/><rect x="807" y="540" width="8.6" height="440" fill="url(#sg48)"/><rect x="815" y="540" width="8.6" height="440" fill="url(#sg49)"/><rect x="823" y="540" width="8.6" height="440" fill="url(#sg50)"/><rect x="831" y="540" width="8.6" height="440" fill="url(#sg51)"/><rect x="839" y="540" width="8.6" height="440" fill="url(#sg52)"/><rect x="847" y="540" width="8.6" height="440" fill="url(#sg53)"/><rect x="855" y="540" width="8.6" height="440" fill="url(#sg54)"/><rect x="863" y="540" width="8.6" height="440" fill="url(#sg55)"/><rect x="871" y="540" width="8.6" height="440" fill="url(#sg56)"/><rect x="879" y="540" width="8.6" height="440" fill="url(#sg57)"/><rect x="887" y="540" width="8.6" height="440" fill="url(#sg58)"/><rect x="895" y="540" width="8.6" height="440" fill="url(#sg59)"/><rect x="903" y="540" width="8.6" height="440" fill="url(#sg60)"/><rect x="911" y="540" width="8.6" height="440" fill="url(#sg61)"/><rect x="919" y="540" width="8.6" height="440" fill="url(#sg62)"/><rect x="927" y="540" width="8.6" height="440" fill="url(#sg63)"/><rect x="935" y="540" width="8.6" height="440" fill="url(#sg64)"/><rect x="943" y="540" width="8.6" height="440" fill="url(#sg65)"/><rect x="951" y="540" width="8.6" height="440" fill="url(#sg66)"/><rect x="959" y="540" width="8.6" height="440" fill="url(#sg67)"/><rect x="967" y="540" width="8.6" height="440" fill="url(#sg68)"/><rect x="975" y="540" width="8.6" height="440" fill="url(#sg69)"/><rect x="983" y="540" width="8.6" height="440" fill="url(#sg70)"/><rect x="991" y="540" width="8.6" height="440" fill="url(#sg71)"/><rect x="999" y="540" width="8.6" height="440" fill="url(#sg72)"/><rect x="1007" y="540" width="8.6" height="440" fill="url(#sg73)"/><rect x="1015" y="540" width="8.6" height="440" fill="url(#sg74)"/><rect x="1023" y="540" width="8.6" height="440" fill="url(#sg75)"/><rect x="1031" y="540" width="8.6" height="440" fill="url(#sg76)"/><rect x="1039" y="540" width="8.6" height="440" fill="url(#sg77)"/><rect x="1047" y="540" width="8.6" height="440" fill="url(#sg78)"/><rect x="1055" y="540" width="8.6" height="440" fill="url(#sg79)"/><rect x="1063" y="540" width="8.6" height="440" fill="url(#sg80)"/><rect x="1071" y="540" width="8.6" height="440" fill="url(#sg81)"/><rect x="1079" y="540" width="8.6" height="440" fill="url(#sg82)"/><rect x="1087" y="540" width="8.6" height="440" fill="url(#sg83)"/><rect x="1095" y="540" width="8.6" height="440" fill="url(#sg84)"/><rect x="1103" y="540" width="8.6" height="440" fill="url(#sg85)"/><rect x="1111" y="540" width="8.6" height="440" fill="url(#sg86)"/><rect x="1119" y="540" width="8.6" height="440" fill="url(#sg87)"/><rect x="1127" y="540" width="8.6" height="440" fill="url(#sg88)"/><rect x="1135" y="540" width="8.6" height="440" fill="url(#sg89)"/><rect x="1143" y="540" width="8.6" height="440" fill="url(#sg90)"/><rect x="1151" y="540" width="8.6" height="440" fill="url(#sg91)"/><rect x="1159" y="540" width="8.6" height="440" fill="url(#sg92)"/><rect x="1167" y="540" width="8.6" height="440" fill="url(#sg93)"/><rect x="1175" y="540" width="8.6" height="440" fill="url(#sg94)"/><rect x="1183" y="540" width="8.6" height="440" fill="url(#sg95)"/><rect x="1191" y="540" width="8.6" height="440" fill="url(#sg96)"/><rect x="1199" y="540" width="8.6" height="440" fill="url(#sg97)"/><rect x="1207" y="540" width="8.6" height="440" fill="url(#sg98)"/><rect x="1215" y="540" width="8.6" height="440" fill="url(#sg99)"/><rect x="1223" y="540" width="8.6" height="440" fill="url(#sg100)"/><rect x="1231" y="540" width="8.6" height="440" fill="url(#sg101)"/><rect x="1239" y="540" width="8.6" height="440" fill="url(#sg102)"/><rect x="1247" y="540" width="8.6" height="440" fill="url(#sg103)"/><rect x="1255" y="540" width="8.6" height="440" fill="url(#sg104)"/><rect x="1263" y="540" width="8.6" height="440" fill="url(#sg105)"/></g>
<polyline points="585,833 620,824.6 644,820 669,805 693,789 717,769.5 742,753 766,734 782,721 798,709.5 813.6,699.5 839.5,693 865.5,684 881,677 932,656 970,645 1031,636 1058,629 1071,621 1096,606 1137,598 1165,591 1213,571 1234,557.5" fill="none" stroke="#003828" stroke-width="11" opacity=".22" filter="url(#b3)"/>
<polygon points="854,931 900,928 950,923 1000,914 1051,904 1100,894 1154,883 1181,875 1198,886 1234,890 1234,894 1150,906 1051,926 950,940 915,943 854,947" fill="#c46200" filter="url(#b3)"/>
<polygon points="597,957 650,952 706,948 813,936 870,938 813,950 706,963 650,966 597,968" fill="#a89e00" opacity=".65" filter="url(#b2)"/>
<polygon points="593,966.5 650,962.5 690,961.5 700,966 650,970 597,973" fill="#e8e000"/>
<polygon points="686,966.5 700,964 760,958 813,949 915,941 1051,924 1234,891.5 1234,930 1154,940 1051,954 949,962 813,965 706,970 686,970" fill="#ee7a06"/>
<polygon points="450,868 526,849 645,818 700,785 745,800 705,860 665,900 645,962 600,972 560,925 527,909 460,886" fill="url(#dotp)" opacity=".75"/>
<g filter="url(#b3)">
<polygon points="1020,810 1057,780 1092,808" fill="#98e000" opacity=".55"/>
<polygon points="1095,808 1132,788 1152,808" fill="#98e000" opacity=".55"/>
<polygon points="1160,808 1203,776 1245,802" fill="#98e000" opacity=".55"/>
<polygon points="1030,854 1063,836 1092,855" fill="#d8cc00" opacity=".55"/>
<polygon points="1100,855 1138,836 1165,854" fill="#d8cc00" opacity=".55"/>
<polygon points="930,720 965,700 990,740 960,750" fill="#00f0a0" opacity=".35"/>
<polygon points="1010,705 1050,690 1075,735 1040,745" fill="#00f0a0" opacity=".35"/>
</g>
<g filter="url(#b6)">
<polygon points="1003,646 1031,639 1072,718 1038,725" fill="#fff" opacity=".11"/>
<polygon points="1096,609 1120,602 1157,691 1130,704" fill="#fff" opacity=".11"/>
<polygon points="1164,599 1191,588 1240,677 1208,691" fill="#fff" opacity=".10"/>
<polygon points="900,690 925,680 965,760 935,770" fill="#fff" opacity=".09"/>
<polygon points="1058,633 1092,609 1120,677 1086,691" fill="#003" opacity=".07"/>
<polygon points="1137,602 1164,599 1188,660 1164,670" fill="#003" opacity=".07"/>
<polygon points="960,655 1000,648 1030,720 995,730" fill="#003" opacity=".07"/>
<polygon points="1040,800 1075,780 1110,830 1070,850" fill="#fff" opacity=".06"/>
<polygon points="1110,800 1140,785 1180,835 1140,850" fill="#fff" opacity=".06"/>
<polygon points="640,860 700,840 760,900 690,915" fill="#fff" opacity=".08"/>
</g>
</g></svg>
<svg style="position:absolute;left:0;top:0" width="1233" height="1057" viewBox="0 0 1233 1057"><path d="M929 520 L932.5 656" stroke="#2e2e2e" stroke-width="1.25" fill="none"/><path d="M833 557 L837 701" stroke="#2e2e2e" stroke-width="1.25" fill="none"/><path d="M1145 527 L1146 597" stroke="#2e2e2e" stroke-width="1.25" fill="none"/><path d="M966.5 536.5 L969 645" stroke="#2e2e2e" stroke-width="1.25" fill="none"/><path d="M767 574 L773.5 753" stroke="#2e2e2e" stroke-width="1.25" fill="none"/><path d="M1135.5 553.5 L1139.5 777.5" stroke="#2e2e2e" stroke-width="1.25" fill="none"/><path d="M607 604 L617.5 861" stroke="#2e2e2e" stroke-width="1.25" fill="none"/><rect x="835.8" y="699.8" width="2.4" height="2.6" fill="#20e030"/><rect x="1144.8" y="588.8" width="2.4" height="2.6" fill="#20e030"/><rect x="616.3" y="862.8" width="2.4" height="2.6" fill="#20e030"/><rect x="930.5" y="501.5" width="76.0" height="27.5" fill="#999" stroke="#737373" stroke-width="1"/><text x="933.9" y="522.2" font-family="Liberation Sans" font-size="24.3" fill="#000" textLength="57.0" lengthAdjust="spacingAndGlyphs">W-17</text><path d="M924.4 524 L929 515 L933.6 524 Z" fill="#000"/><rect x="835.5" y="536.5" width="76.5" height="29.5" fill="#999" stroke="#737373" stroke-width="1"/><text x="838.9" y="559.2" font-family="Liberation Sans" font-size="24.3" fill="#000" textLength="57.0" lengthAdjust="spacingAndGlyphs">W-13</text><path d="M828.4 561 L833 552 L837.6 561 Z" fill="#000"/><rect x="1146" y="506" width="59.5" height="26.5" fill="#999" stroke="#737373" stroke-width="1"/><text x="1149.4" y="525.7" font-family="Liberation Sans" font-size="24.3" fill="#000" textLength="42.5" lengthAdjust="spacingAndGlyphs">W-9</text><path d="M1140.4 531 L1145 522 L1149.6 531 Z" fill="#000"/><rect x="968.5" y="516.5" width="76.0" height="29.0" fill="#999" stroke="#737373" stroke-width="1"/><text x="971.9" y="538.7" font-family="Liberation Sans" font-size="24.3" fill="#000" textLength="57.0" lengthAdjust="spacingAndGlyphs">W-10</text><path d="M961.9 540.5 L966.5 531.5 L971.1 540.5 Z" fill="#000"/><rect x="769" y="554.5" width="78.5" height="29.0" fill="#999" stroke="#737373" stroke-width="1"/><text x="772.4" y="576.7" font-family="Liberation Sans" font-size="24.3" fill="#000" textLength="58.0" lengthAdjust="spacingAndGlyphs">W-16</text><path d="M762.4 578 L767 569 L771.6 578 Z" fill="#000"/><rect x="1137" y="533" width="77" height="29" fill="#999" stroke="#737373" stroke-width="1"/><text x="1140.4" y="555.2" font-family="Liberation Sans" font-size="24.3" fill="#000" textLength="57.0" lengthAdjust="spacingAndGlyphs">W-12</text><path d="M1130.9 557.5 L1135.5 548.5 L1140.1 557.5 Z" fill="#000"/><rect x="610" y="583.5" width="79.5" height="30.0" fill="#999" stroke="#737373" stroke-width="1"/><text x="613.4" y="606.7" font-family="Liberation Sans" font-size="24.3" fill="#000" textLength="58.5" lengthAdjust="spacingAndGlyphs">W-15</text><path d="M602.4 608 L607 599 L611.6 608 Z" fill="#000"/></svg>
<div style="position:absolute;left:86px;top:53px;width:249px;height:714px;box-sizing:border-box;background:#fafafa;border:1px solid #979797;border-radius:2px;box-shadow:2px 2px 3px rgba(0,0,0,.28);"></div>
<div style="position:absolute;left:87px;top:56px;width:31px;height:709px;background:#e9eeee;border-right:1px solid #c5c5c5;box-sizing:border-box;"></div>
<span class="t" style="left:127px;top:59.34px;font-size:14px;color:#1e2f6b;font-weight:400;letter-spacing:-0.240px;">Toolbars</span>
<svg style="position:absolute;left:316px;top:64.7px;" width="4" height="7" viewBox="0 0 4 7"><path d="M0 0 L3.7 3.3 L0 6.6 Z" fill="#2d3a6e"/></svg>
<span class="t" style="left:127px;top:84.34px;font-size:14px;color:#1e2f6b;font-weight:400;letter-spacing:-1.341px;">Panes</span>
<svg style="position:absolute;left:316px;top:89.7px;" width="4" height="7" viewBox="0 0 4 7"><path d="M0 0 L3.7 3.3 L0 6.6 Z" fill="#2d3a6e"/></svg>
<div style="position:absolute;left:127px;top:107px;width:207px;height:1px;background:#c5c5c5;"></div>
<span class="t" style="left:127px;top:112.49px;font-size:14px;color:#1e2f6b;font-weight:400;letter-spacing:-0.498px;">Color Scale</span>
<svg style="position:absolute;left:316px;top:117.85000000000001px;" width="4" height="7" viewBox="0 0 4 7"><path d="M0 0 L3.7 3.3 L0 6.6 Z" fill="#2d3a6e"/></svg>
<span class="t" style="left:127px;top:137.49px;font-size:14px;color:#1e2f6b;font-weight:400;letter-spacing:-0.475px;">Aspect Ratios and Scale</span>
<div style="position:absolute;left:127px;top:160px;width:207px;height:1px;background:#c5c5c5;"></div>
<span class="t" style="left:127px;top:165.64px;font-size:14px;color:#1e2f6b;font-weight:400;letter-spacing:-0.455px;">View Type</span>
<svg style="position:absolute;left:316px;top:171.0px;" width="4" height="7" viewBox="0 0 4 7"><path d="M0 0 L3.7 3.3 L0 6.6 Z" fill="#2d3a6e"/></svg>
<span class="t" style="left:127px;top:190.64px;font-size:14px;color:#1e2f6b;font-weight:400;letter-spacing:-0.369px;">Plot Type</span>
<svg style="position:absolute;left:316px;top:196.0px;" width="4" height="7" viewBox="0 0 4 7"><path d="M0 0 L3.7 3.3 L0 6.6 Z" fill="#2d3a6e"/></svg>
<div style="position:absolute;left:127px;top:213px;width:207px;height:1px;background:#c5c5c5;"></div>
<span class="t" style="left:127px;top:218.79px;font-size:14px;color:#1e2f6b;font-weight:400;letter-spacing:-0.701px;">IJK Slabs and Regions...</span>
<span class="t" style="left:127px;top:243.79px;font-size:14px;color:#1e2f6b;font-weight:400;letter-spacing:-0.821px;">Cut Plane...</span>
<div style="position:absolute;left:127px;top:266px;width:207px;height:1px;background:#c5c5c5;"></div>
<span class="t" style="left:127px;top:271.94px;font-size:14px;color:#1e2f6b;font-weight:400;letter-spacing:-0.465px;">Paper Zoom</span>
<svg style="position:absolute;left:316px;top:277.3px;" width="4" height="7" viewBox="0 0 4 7"><path d="M0 0 L3.7 3.3 L0 6.6 Z" fill="#2d3a6e"/></svg>
<div style="position:absolute;left:127px;top:295px;width:207px;height:1px;background:#c5c5c5;"></div>
<span class="t" style="left:127px;top:300.09px;font-size:14px;color:#1e2f6b;font-weight:400;letter-spacing:-0.199px;">Move Object</span>
<div style="position:absolute;left:127px;top:323px;width:207px;height:1px;background:#c5c5c5;"></div>
<span class="t" style="left:127px;top:328.24px;font-size:14px;color:#1e2f6b;font-weight:400;letter-spacing:-0.394px;">Resize Viewport</span>
<span class="t" style="left:127px;top:353.24px;font-size:14px;color:#1e2f6b;font-weight:400;letter-spacing:-0.385px;">Zoom Reservoir</span>
<span class="t" style="left:127px;top:378.24px;font-size:14px;color:#1e2f6b;font-weight:400;letter-spacing:-0.754px;">Pan Reservoir</span>
<span class="t" style="left:127px;top:403.24px;font-size:14px;color:#1e2f6b;font-weight:400;letter-spacing:-0.369px;">Undo Zoom or Pan</span>
<span class="t" style="left:127px;top:427.74px;font-size:14px;color:#1e2f6b;font-weight:400;letter-spacing:-0.492px;">Full Reservoir View</span>
<span class="t" style="left:127px;top:453.24px;font-size:14px;color:#1e2f6b;font-weight:400;letter-spacing:-0.334px;">Rotate (3D View)</span>
<div style="position:absolute;left:127px;top:476px;width:207px;height:1px;background:#c5c5c5;"></div>
<span class="t" style="left:127px;top:481.09px;font-size:14px;color:#1e2f6b;font-weight:400;letter-spacing:-0.650px;">Synchronize Views...</span>
<div style="position:absolute;left:127px;top:504px;width:207px;height:1px;background:#c5c5c5;"></div>
<span class="t" style="left:127px;top:508.34px;font-size:14px;color:#1e2f6b;font-weight:400;letter-spacing:-0.546px;">3D Settings...</span>
<span class="t" style="left:127px;top:533.34px;font-size:14px;color:#1e2f6b;font-weight:400;letter-spacing:-0.440px;">Stereoscopic View Settings...</span>
<div style="position:absolute;left:127px;top:557px;width:207px;height:1px;background:#c5c5c5;"></div>
<span class="t" style="left:127px;top:561.39px;font-size:14px;color:#1e2f6b;font-weight:400;letter-spacing:-0.545px;">Properties...</span>
<span class="t" style="left:127px;top:586.49px;font-size:14px;color:#1e2f6b;font-weight:400;letter-spacing:-0.436px;">Probe Display...</span>
<div style="position:absolute;left:127px;top:610px;width:207px;height:1px;background:#c5c5c5;"></div>
<span class="t" style="left:127px;top:614.64px;font-size:14px;color:#a9a9a9;font-weight:400;letter-spacing:-0.325px;">Open Plot View</span>
<span class="t" style="left:127px;top:639.84px;font-size:14px;color:#a9a9a9;font-weight:400;letter-spacing:-0.288px;">Show/Hide Plot Tree View</span>
<span class="t" style="left:127px;top:665.14px;font-size:14px;color:#1e2f6b;font-weight:400;letter-spacing:-0.236px;">Show/Hide Model Tree View</span>
<span class="t" style="left:127px;top:690.14px;font-size:14px;color:#1e2f6b;font-weight:400;letter-spacing:-0.310px;">Open Time-Line View</span>
<div style="position:absolute;left:127px;top:713px;width:207px;height:1px;background:#c5c5c5;"></div>
<span class="t" style="left:127px;top:718.39px;font-size:14px;color:#1e2f6b;font-weight:400;letter-spacing:-0.375px;">New View</span>
<div style="position:absolute;left:88px;top:740.9499999999998px;width:245px;height:23.2px;box-sizing:border-box;border:1px solid #ffd57a;border-radius:2px;background:linear-gradient(#fffae2 0%,#ffeeb8 44%,#ffd24e 52%,#ffd055 72%,#ffe6a0 100%);"></div>
<span class="t" style="left:127px;top:743.69px;font-size:14px;color:#1e2f6b;font-weight:400;letter-spacing:-0.716px;">Theme</span>
<svg style="position:absolute;left:316px;top:749.3499999999999px;" width="4" height="7" viewBox="0 0 4 7"><path d="M0 0 L3.7 3.3 L0 6.6 Z" fill="#2d3a6e"/></svg>
<svg style="position:absolute;left:93px;top:218.45000000000002px;" width="19" height="19" viewBox="0 0 19 19"><rect x="5" y="1" width="12.5" height="4.6" fill="#fff" stroke="#1e1e8c" stroke-width="1.7"/><rect x="1" y="7.2" width="12.5" height="4.6" fill="#fff" stroke="#1e1e8c" stroke-width="1.7"/><rect x="5" y="13.4" width="12.5" height="4.6" fill="#fff" stroke="#1e1e8c" stroke-width="1.7"/></svg>
<svg style="position:absolute;left:93px;top:243.95000000000002px;" width="19" height="18" viewBox="0 0 19 18"><path d="M1 16.5 L3 13 L12 5.5 L13.5 8 L6.5 15 Z" fill="#fff" stroke="#111" stroke-width="1.2" stroke-linejoin="round"/><path d="M12 5.8 L16.5 0.8 L18 2.2 L13.8 7.6 Z" fill="#111"/></svg>
<svg style="position:absolute;left:93.4px;top:300.05px;" width="18.4" height="17.848" viewBox="0 0 18 18"><path d="M9 1.5 V16.5 M1.5 9 H16.5" stroke="#111" stroke-width="1.6"/><path d="M9 0 L12 3.6 H6 Z M9 18 L12 14.4 H6 Z M0 9 L3.6 6 V12 Z M18 9 L14.4 6 V12 Z" fill="#111"/></svg>
<svg style="position:absolute;left:94.2px;top:328.2px;" width="16" height="18.56" viewBox="0 0 16 18"><path d="M0 7 H16 M0 11 H16" stroke="#111" stroke-width="1.5"/><path d="M8 1 V6 M8 12 V17" stroke="#111" stroke-width="1.5"/><path d="M8 0 L11 3.4 H5 Z M8 18 L11 14.6 H5 Z" fill="#111"/></svg>
<svg style="position:absolute;left:91.6px;top:351.9px;" width="21.5" height="21.5" viewBox="0 0 21 21"><circle cx="8" cy="8" r="6.6" fill="#d8f6fb" stroke="#111" stroke-width="1.6"/><path d="M4.2 6.5 Q5.5 3.6 8.5 3.6" stroke="#4fd0e6" stroke-width="1.6" fill="none"/><path d="M12.8 12.8 L19 19" stroke="#111" stroke-width="2.8" stroke-linecap="round"/></svg>
<svg style="position:absolute;left:92px;top:377.9px;" width="22.0" height="18.700000000000003" viewBox="0 0 20 17"><path d="M3.5 9.5 Q1.5 6.5 3 5.5 Q4.6 5 6 7.4 L5.2 3.6 Q5.2 2 6.6 2 Q7.8 2 8.4 3.8 L8.6 2 Q9.4 0.6 10.8 1.4 L11.8 3.2 Q13 2 14.2 3.2 L15.4 5.2 Q16.8 4.6 17.6 6.2 L19 10.5 Q19.2 13.5 17 15.6 H8 Q4.8 13 3.5 9.5 Z" fill="#fff" stroke="#111" stroke-width="1.2" stroke-linejoin="round"/><path d="M2 12 H6 M1.5 14.2 H7 M2.5 16.2 H8" stroke="#111" stroke-width="1.1"/></svg>
<svg style="position:absolute;left:92.2px;top:401.4px;" width="21.5" height="21.5" viewBox="0 0 21 21"><circle cx="8" cy="8" r="6.6" fill="#d8f6fb" stroke="#111" stroke-width="1.6"/><path d="M4.2 6.5 Q5.5 3.6 8.5 3.6" stroke="#4fd0e6" stroke-width="1.6" fill="none"/><path d="M12.8 12.8 L19 19" stroke="#111" stroke-width="2.8" stroke-linecap="round"/><path d="M5.5 11 L10.8 4.8" stroke="#e03030" stroke-width="2"/></svg>
<svg style="position:absolute;left:93px;top:451.4px;" width="20.160000000000004" height="20.160000000000004" viewBox="0 0 18 18"><path d="M4.38 5.33 A6.1 6.1 0 1 0 12.97 6.08" fill="none" stroke="#111" stroke-width="2.5"/><path d="M9.4 3.7 H14.2 V8" fill="none" stroke="#111" stroke-width="2.5"/></svg>
<svg style="position:absolute;left:91.5px;top:562.8499999999999px;" width="20" height="18" viewBox="0 0 20 18"><rect x="1" y="4.5" width="13" height="12" fill="#fff" stroke="#111" stroke-width="1.4"/><path d="M3 8 H12 M3 11 H6 M7.5 11 H12 M3 14 H6 M7.5 14 H12" stroke="#111" stroke-width="1.3"/><path d="M5 6 L9.5 1.5 L14 6" fill="#fff" stroke="#111" stroke-width="1.2"/><path d="M11 2.5 H16" stroke="#111" stroke-width="1.3"/><rect x="15.5" y="0.5" width="4" height="4.5" fill="#1a1a8a"/></svg>
<div style="position:absolute;left:91.5px;top:662.9999999999999px;width:23px;height:23px;box-sizing:border-box;border:1px solid #f29536;border-radius:2px;background:#ffd58b;"></div>
<svg style="position:absolute;left:94.5px;top:664.4999999999999px;" width="18" height="20" viewBox="0 0 18 20"><rect x="1" y="0.8" width="9" height="3.6" fill="#8e86c9" stroke="#2b2470" stroke-width="1"/><path d="M5.5 4.5 V17 M5.5 8.5 H9 M5.5 12.8 H9 M5.5 17 H9" stroke="#444" stroke-width="1" fill="none"/><rect x="9" y="6.6" width="8" height="3.4" fill="#8e86c9" stroke="#2b2470"/><rect x="9" y="11" width="8" height="3.4" fill="#8e86c9" stroke="#2b2470"/><rect x="9" y="15.3" width="8" height="3.4" fill="#8e86c9" stroke="#2b2470"/></svg>
<svg style="position:absolute;left:93px;top:690.4999999999999px;" width="20" height="18" viewBox="0 0 20 18"><rect x="1" y="4" width="14" height="13" fill="#fff" stroke="#1e1e78" stroke-width="1.6"/><rect x="1" y="4" width="14" height="3.2" fill="#1e1e78"/><path d="M5 7 V17" stroke="#1e1e78" stroke-width="1.6"/><path d="M7 10 H13 M7 13.5 H13" stroke="#1e1e78" stroke-width="1.3"/><circle cx="14.5" cy="4.5" r="3.8" fill="#f4d800" stroke="#222" stroke-width="1"/><path d="M14.5 2.2 V4.8" stroke="#222" stroke-width="1"/></svg>
<div style="position:absolute;left:334px;top:740.4px;width:192px;height:130.2px;box-sizing:border-box;background:#fafafa;border:1px solid #979797;border-radius:2px;box-shadow:2px 2px 3px rgba(0,0,0,.28);"></div>
<div style="position:absolute;left:335px;top:743.4px;width:29.8px;height:125.19999999999999px;background:#e9eeee;border-right:1px solid #c5c5c5;box-sizing:border-box;"></div>
<span class="t" style="left:374px;top:746.14px;font-size:14px;color:#1e2f6b;font-weight:400;letter-spacing:-0.386px;">Office 2003 - XP</span>
<div style="position:absolute;left:339.5px;top:769.5px;width:22px;height:21.5px;box-sizing:border-box;border:1px solid #f0a040;border-radius:2px;background:#fdd793;"></div>
<svg style="position:absolute;left:344px;top:773px;" width="14" height="15" viewBox="0 0 14 15"><path d="M1.5 8.5 L4.6 13 Q7 6 11.5 1" fill="none" stroke="#1e1e6e" stroke-width="1.6"/></svg>
<span class="t" style="left:374px;top:771.14px;font-size:14px;color:#1e2f6b;font-weight:400;letter-spacing:-0.284px;">Office 2007 - Blue</span>
<div style="position:absolute;left:336px;top:793.4px;width:188px;height:24.4px;box-sizing:border-box;border:1px solid #ffd57a;border-radius:2px;background:linear-gradient(#fffae2 0%,#ffeeb8 44%,#ffd24e 52%,#ffd055 72%,#ffe6a0 100%);"></div>
<span class="t" style="left:374px;top:796.14px;font-size:14px;color:#1e2f6b;font-weight:400;letter-spacing:-0.265px;">Office 2007 - Black</span>
<span class="t" style="left:374px;top:821.14px;font-size:14px;color:#1e2f6b;font-weight:400;letter-spacing:-0.265px;">Office 2007 - Silver</span>
<span class="t" style="left:374px;top:846.14px;font-size:14px;color:#1e2f6b;font-weight:400;letter-spacing:-0.210px;">Whidbey</span>
<div style="position:absolute;left:0px;top:1048px;width:1233px;height:9px;background:#fff;"></div>
<div style="position:absolute;left:0px;top:1046px;width:1233px;height:1px;background:#696969;"></div>
<svg style="position:absolute;left:860.8px;top:-9.2px;" width="16" height="16" viewBox="0 0 16 16"><circle cx="8" cy="8" r="5.9" fill="#fff" stroke="#555" stroke-width="2.1"/></svg>
<svg style="position:absolute;left:860.8px;top:1038.7px;" width="16" height="16" viewBox="0 0 16 16"><circle cx="8" cy="8" r="5.9" fill="#fff" stroke="#555" stroke-width="2.1"/></svg>
<svg style="position:absolute;left:-8.8px;top:515px;" width="16" height="16" viewBox="0 0 16 16"><circle cx="8" cy="8" r="5.9" fill="#fff" stroke="#555" stroke-width="2.1"/></svg>
<svg style="position:absolute;left:-8.8px;top:1038.7px;" width="16" height="16" viewBox="0 0 16 16"><circle cx="8" cy="8" r="5.9" fill="#fff" stroke="#555" stroke-width="2.1"/></svg>
<svg style="position:absolute;left:-8.8px;top:-9.2px;" width="16" height="16" viewBox="0 0 16 16"><circle cx="8" cy="8" r="5.9" fill="#fff" stroke="#555" stroke-width="2.1"/></svg>
</body></html>
